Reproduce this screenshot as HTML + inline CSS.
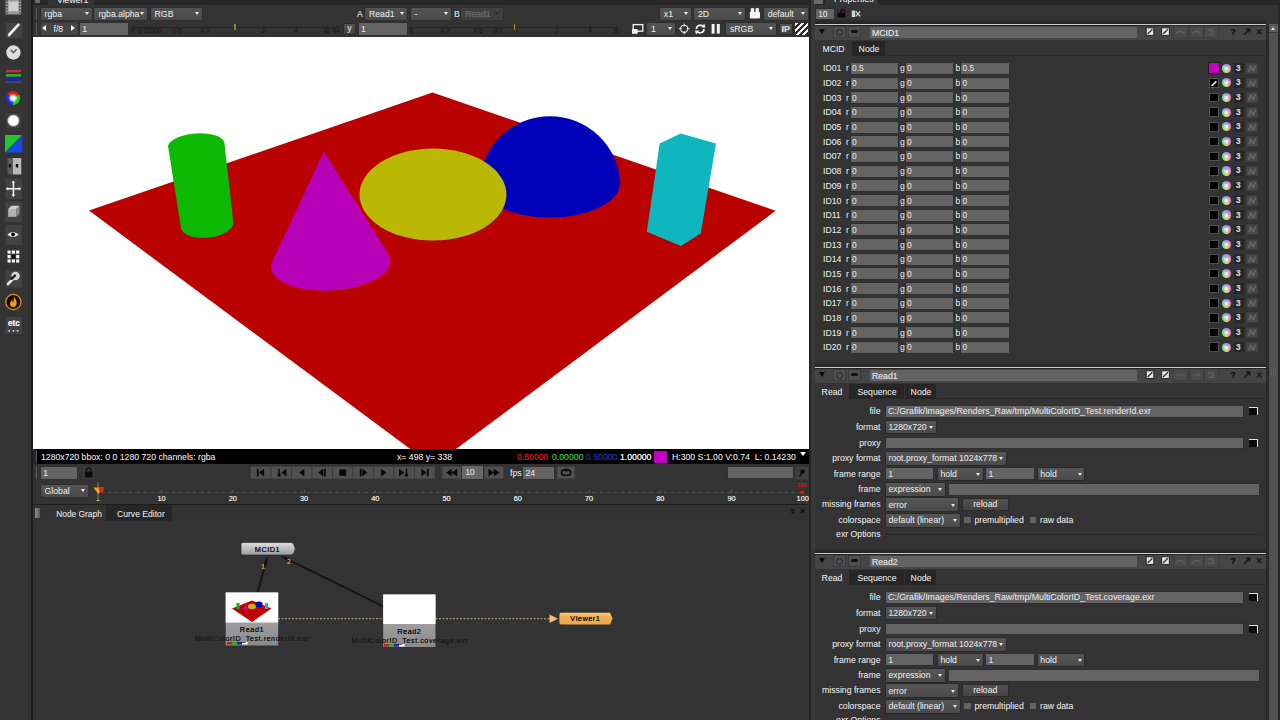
<!DOCTYPE html><html><head><meta charset="utf-8"><title>Nuke</title><style>
*{box-sizing:border-box;margin:0;padding:0}
html,body{width:1280px;height:720px;overflow:hidden;background:#333333}
body{position:relative;font-family:"Liberation Sans",sans-serif;font-size:8.7px;color:#dedede;line-height:1}
.a{position:absolute}
.t{position:absolute;white-space:nowrap;line-height:12px;height:12px;text-shadow:0 0 0.5px rgba(222,222,222,0.55)}
.f{position:absolute;background:#636363;box-shadow:0 0 0 0.7px #2e2e2e}
.dd{position:absolute;background:linear-gradient(#565656,#4a4a4a);box-shadow:0 0 0 0.8px #272727;border-radius:1px}
.dd:after{content:"";position:absolute;right:2.6px;top:50%;margin-top:-1px;border-left:2.5px solid transparent;border-right:2.5px solid transparent;border-top:3px solid #e8e8e8}
.dd2{position:absolute;background:linear-gradient(#545454,#4a4a4a);border-radius:1.5px;box-shadow:0 0 0 0.6px #2a2a2a}
.dd2:after{content:"";position:absolute;right:3px;top:50%;margin-top:-1.5px;border-left:2.5px solid transparent;border-right:2.5px solid transparent;border-top:3px solid #f0f0f0}
.btn{position:absolute;background:linear-gradient(#525252,#434343);border:1px solid #2b2b2b}
.r{text-align:right}
</style></head><body>
<div class="a" style="left:0px;top:0px;width:31.2px;height:720px;background:#333333;"></div>
<div class="a" style="left:31.2px;top:0px;width:1.9px;height:720px;background:#1c1c1c;"></div>
<svg class="a" style="left:0;top:0" width="30" height="340" viewBox="0 0 30 340">
<defs>
<radialGradient id="glow"><stop offset="0" stop-color="#fff"/><stop offset="0.7" stop-color="#fff"/><stop offset="1" stop-color="#fff" stop-opacity="0"/></radialGradient>
<radialGradient id="cw"><stop offset="0" stop-color="#fff"/><stop offset="0.35" stop-color="#fff" stop-opacity="0.9"/><stop offset="0.8" stop-color="#fff" stop-opacity="0"/></radialGradient>
</defs>
<!-- film -->
<rect x="5.6" y="-2" width="15.6" height="16.5" fill="#9a9a9a"/>
<rect x="8.6" y="1.5" width="9.6" height="9.6" fill="#cfcfcf"/>
<g fill="#4a4a4a"><rect x="6.3" y="0" width="1.5" height="1.6"/><rect x="6.3" y="3" width="1.5" height="1.6"/><rect x="6.3" y="6" width="1.5" height="1.6"/><rect x="6.3" y="9" width="1.5" height="1.6"/><rect x="6.3" y="12" width="1.5" height="1.6"/>
<rect x="19" y="0" width="1.5" height="1.6"/><rect x="19" y="3" width="1.5" height="1.6"/><rect x="19" y="6" width="1.5" height="1.6"/><rect x="19" y="9" width="1.5" height="1.6"/><rect x="19" y="12" width="1.5" height="1.6"/></g>
<!-- pencil -->
<rect x="5.6" y="23" width="17" height="15" fill="#434343"/>
<line x1="9" y1="35" x2="18.5" y2="24.6" stroke="#f0f0f0" stroke-width="2.6" stroke-linecap="round"/>
<!-- clock -->
<circle cx="13.4" cy="52.5" r="7.2" fill="#dcdcdc"/>
<path d="M10.8,49.8 L13.4,52.8 L16.6,49.2" stroke="#555" stroke-width="1.4" fill="none"/>
<!-- channel -->
<rect x="6" y="69.8" width="15" height="2.5" fill="#c03040"/>
<rect x="6" y="74.1" width="15" height="2.5" fill="#30b030"/>
<rect x="6" y="78.2" width="15" height="2.5" fill="#2020c8"/>
<rect x="6" y="81.5" width="15" height="1.5" fill="#505050"/>
<!-- color wheel -->
<path d="M13,98 L6.9,94.5 A7,7 0 0 1 19.1,94.5 Z" fill="#e01818"/>
<path d="M13,98 L19.1,94.5 A7,7 0 0 1 13,105 Z" fill="#18d018"/>
<path d="M13,98 L13,105 A7,7 0 0 1 6.9,94.5 Z" fill="#1830e0"/>
<circle cx="13" cy="98" r="6" fill="url(#cw)"/>
<!-- filter glow -->
<rect x="6" y="113" width="15" height="15" fill="#3e3e3e"/>
<circle cx="13.4" cy="120.6" r="6.6" fill="url(#glow)"/>
<!-- keyer -->
<polygon points="5,135 22.3,135 5,152.5" fill="#20c828"/>
<polygon points="22.3,135 22.3,152.5 5,152.5" fill="#1848e0"/>
<!-- merge -->
<rect x="7.5" y="158" width="5.5" height="16.4" fill="#5a5a5a"/>
<rect x="13" y="158" width="8.3" height="16.4" fill="#b8b8b8"/>
<rect x="8.8" y="164" width="2.2" height="3.4" fill="#0a0a0a"/><rect x="15.8" y="164" width="2.4" height="3.4" fill="#0a0a0a"/>
<!-- transform -->
<rect x="5.6" y="178.5" width="16.6" height="20.5" fill="#424242"/>
<path d="M13.4,181.5 V196 M6.4,188.8 H20.4" stroke="#f4f4f4" stroke-width="1.5"/>
<path d="M13.4,180.5 l-1.8,2.6 h3.6z M13.4,197 l-1.8,-2.6 h3.6z M5.6,188.8 l2.6,-1.8 v3.6z M21.2,188.8 l-2.6,-1.8 v3.6z" fill="#f4f4f4"/>
<!-- cube -->
<rect x="5.6" y="201.5" width="16.6" height="20.5" fill="#424242"/>
<polygon points="8.2,209 11.5,205.8 19.5,205.8 16.5,209" fill="#d0d0d0"/>
<rect x="8.2" y="209" width="8.3" height="7.8" fill="#b4b4b4"/>
<polygon points="16.5,209 19.5,205.8 19.5,213.6 16.5,216.8" fill="#8c8c8c"/>
<!-- eye -->
<rect x="5.6" y="225" width="16.6" height="20" fill="#424242"/>
<path d="M7.4,234.6 Q13,229.6 18.8,234.6 Q13,239.6 7.4,234.6Z" fill="#f4f4f4"/>
<circle cx="13" cy="234.5" r="1.9" fill="#0a0a0a"/>
<!-- grid -->
<g fill="#f4f4f4"><rect x="7.5" y="250.5" width="3.2" height="3.2"/><rect x="11.8" y="250.5" width="3.2" height="3.2"/><rect x="16.1" y="250.5" width="3.2" height="3.2"/>
<rect x="7.5" y="255" width="3.2" height="3.2"/><rect x="16.1" y="255" width="3.2" height="3.2"/>
<rect x="7.5" y="259.4" width="3.2" height="3.2"/><rect x="11.8" y="259.4" width="3.2" height="3.2"/><rect x="16.1" y="259.4" width="3.2" height="3.2"/></g>
<rect x="11.8" y="255" width="3.2" height="3.2" fill="#0a0a0a"/>
<!-- wrench -->
<rect x="5.6" y="270.5" width="16.6" height="17" fill="#424242"/>
<path d="M8,284 L12.5,279.5" stroke="#e8e8e8" stroke-width="2.6" stroke-linecap="round"/>
<circle cx="15.5" cy="276" r="4.2" fill="#d8d8d8"/>
<path d="M11.5,279 L15,275.5" stroke="#1a1a1a" stroke-width="2.4" stroke-linecap="round"/>
<!-- furnace -->
<circle cx="13.4" cy="302" r="7.6" fill="#140800" stroke="#e0941c" stroke-width="1.3"/>
<path d="M14.2,296.2 C14.8,299 17.4,300.4 16.6,304 C16.2,306 14.8,307.2 13.2,307.2 C11.2,307.2 9.8,305.8 10,303.6 C10.2,301.8 11.6,301.2 11.8,299.4 C12.8,300.4 12.6,301.8 13.2,302.4 C14,300.6 13.4,298.2 14.2,296.2Z" fill="#f09a20"/>
<!-- etc -->
<rect x="5.6" y="317" width="16.6" height="17" fill="#424242"/>
<g fill="#d8d8d8"><rect x="8.4" y="330" width="1.6" height="1.6"/><rect x="12.6" y="330" width="1.6" height="1.6"/><rect x="16.8" y="330" width="1.6" height="1.6"/></g>
</svg>
<div class="t" style="left:5.6px;top:318px;font-size:8.2px;color:#f0f0f0;text-shadow:0 0 0.4px #f0f0f0;width:16.6px;text-align:center;font-weight:bold">etc</div>
<div class="a" style="left:33px;top:0px;width:776.2px;height:5px;background:#272727;"></div>
<div class="a" style="left:48px;top:0px;width:46px;height:5px;background:#333333;"></div>
<div class="a" style="left:35px;top:0px;width:5px;height:3px;background:#6a6a6a;"></div>
<div class="a" style="left:48px;top:0;width:46px;height:4px;overflow:hidden"><div class="t" style="left:9px;top:-6.5px;font-size:8.7px;color:#e0e0e0">Viewer1</div></div>
<div class="a" style="left:33px;top:5px;width:776.2px;height:33px;background:#333333;"></div>
<div class="a" style="left:809.2px;top:0px;width:1.8px;height:720px;background:#242424;"></div>
<div class="a" style="left:811px;top:0px;width:4px;height:720px;background:#383838;"></div>
<div class="a" style="left:36px;top:8px;width:1px;height:12px;background:#5a5a5a;"></div>
<div class="a" style="left:36px;top:23px;width:1px;height:12px;background:#5a5a5a;"></div>
<div class="dd2" style="left:40.6px;top:8px;width:51.4px;height:11.5px"></div>
<div class="t" style="left:44.6px;top:7.7px;font-size:8.7px;">rgba</div>
<div class="dd2" style="left:94.4px;top:8px;width:53.1px;height:11.5px"></div>
<div class="t" style="left:98.4px;top:7.7px;font-size:8.7px;">rgba.alpha</div>
<div class="dd2" style="left:150.6px;top:8px;width:51.4px;height:11.5px"></div>
<div class="t" style="left:154.6px;top:7.7px;font-size:8.7px;">RGB</div>
<div class="t" style="left:357px;top:7.7px;font-size:8.7px;">A</div>
<div class="dd2" style="left:365px;top:8px;width:42px;height:11.5px"></div>
<div class="t" style="left:369px;top:7.7px;font-size:8.7px;">Read1</div>
<div class="dd2" style="left:410.5px;top:8px;width:40px;height:11.5px"></div>
<div class="t" style="left:414.5px;top:7.7px;font-size:8.7px;">-</div>
<div class="t" style="left:454px;top:7.7px;font-size:8.7px;">B</div>
<div class="a" style="left:461px;top:8px;width:42px;height:11.5px;background:#404040;border-radius:1.5px;box-shadow:0 0 0 0.6px #2c2c2c"></div>
<div class="t" style="left:465px;top:7.7px;font-size:8.7px;color:#6a6a6a;text-shadow:0 0 0.4px #6a6a6a;">Read1</div>
<div class="a" style="left:495px;top:12.2px;border-left:2.5px solid transparent;border-right:2.5px solid transparent;border-top:3px solid #2a2a2a"></div>
<div class="dd2" style="left:659.8px;top:8px;width:31.2px;height:11.5px"></div>
<div class="t" style="left:663.8px;top:7.7px;font-size:8.7px;">x1</div>
<div class="dd2" style="left:694px;top:8px;width:51px;height:11.5px"></div>
<div class="t" style="left:698px;top:7.7px;font-size:8.7px;">2D</div>
<div class="dd2" style="left:763.7px;top:8px;width:44.3px;height:11.5px"></div>
<div class="t" style="left:767.7px;top:7.7px;font-size:8.7px;">default</div>
<svg class="a" style="left:749px;top:7px" width="12" height="13" viewBox="0 0 12 13"><rect x="0.8" y="4.8" width="10.2" height="6.6" rx="1" fill="#f4f4f4"/><rect x="1.8" y="1.2" width="3.3" height="4.5" fill="#f4f4f4"/><rect x="6.6" y="1.2" width="3.3" height="4.5" fill="#f4f4f4"/></svg>
<div class="a" style="left:40.6px;top:23px;width:37.4px;height:11.5px;background:#454545;border-radius:1px"></div>
<div class="a" style="left:42px;top:25.3px;border-top:3.6px solid transparent;border-bottom:3.6px solid transparent;border-right:4.2px solid #f2f2f2"></div>
<div class="t" style="left:53.5px;top:22.7px;font-size:8.7px;">f/8</div>
<div class="a" style="left:71.3px;top:25.3px;border-top:3.6px solid transparent;border-bottom:3.6px solid transparent;border-left:4.2px solid #f2f2f2"></div>
<div class="f" style="left:80px;top:23px;width:47.7px;height:11.5px;"></div>
<div class="t" style="left:82.2px;top:22.75px;font-size:8.7px;">1</div>
<div class="a" style="left:131px;top:26.5px;width:208px;height:1px;background:#242424;"></div>
<div class="a" style="left:133px;top:24.5px;width:1px;height:3px;background:#242424;"></div>
<div class="t" style="left:125px;top:27.2px;font-size:6.5px;color:#1e1e1e;text-shadow:0 0 0.4px #1e1e1e;width:16px;text-align:center;line-height:8px;height:8px">0</div>
<div class="a" style="left:146px;top:24.5px;width:1px;height:3px;background:#242424;"></div>
<div class="t" style="left:138px;top:27.2px;font-size:6.5px;color:#1e1e1e;text-shadow:0 0 0.4px #1e1e1e;width:16px;text-align:center;line-height:8px;height:8px">0.12500</div>
<div class="a" style="left:177px;top:24.5px;width:1px;height:3px;background:#242424;"></div>
<div class="t" style="left:169px;top:27.2px;font-size:6.5px;color:#1e1e1e;text-shadow:0 0 0.4px #1e1e1e;width:16px;text-align:center;line-height:8px;height:8px">0.5</div>
<div class="a" style="left:205px;top:24.5px;width:1px;height:3px;background:#242424;"></div>
<div class="t" style="left:197px;top:27.2px;font-size:6.5px;color:#1e1e1e;text-shadow:0 0 0.4px #1e1e1e;width:16px;text-align:center;line-height:8px;height:8px">0.7</div>
<div class="a" style="left:263px;top:24.5px;width:1px;height:3px;background:#242424;"></div>
<div class="t" style="left:255px;top:27.2px;font-size:6.5px;color:#1e1e1e;text-shadow:0 0 0.4px #1e1e1e;width:16px;text-align:center;line-height:8px;height:8px">2</div>
<div class="a" style="left:296px;top:24.5px;width:1px;height:3px;background:#242424;"></div>
<div class="t" style="left:288px;top:27.2px;font-size:6.5px;color:#1e1e1e;text-shadow:0 0 0.4px #1e1e1e;width:16px;text-align:center;line-height:8px;height:8px">4</div>
<div class="a" style="left:327px;top:24.5px;width:1px;height:3px;background:#242424;"></div>
<div class="t" style="left:319px;top:27.2px;font-size:6.5px;color:#1e1e1e;text-shadow:0 0 0.4px #1e1e1e;width:16px;text-align:center;line-height:8px;height:8px">32</div>
<div class="a" style="left:336px;top:24.5px;width:1px;height:3px;background:#242424;"></div>
<div class="t" style="left:328px;top:27.2px;font-size:6.5px;color:#1e1e1e;text-shadow:0 0 0.4px #1e1e1e;width:16px;text-align:center;line-height:8px;height:8px">64</div>
<div class="a" style="left:234px;top:24.2px;width:1.6px;height:6.2px;background:#8a8630;"></div>
<div class="btn" style="left:343px;top:23px;width:13px;height:11.5px;border-radius:1px"></div>
<div class="t" style="left:343px;top:21.8px;font-size:8.7px;width:13px;text-align:center">y</div>
<div class="f" style="left:358.7px;top:23px;width:48.3px;height:11.5px;"></div>
<div class="t" style="left:360.9px;top:22.75px;font-size:8.7px;">1</div>
<div class="a" style="left:410px;top:26.5px;width:207.5px;height:1px;background:#242424;"></div>
<div class="a" style="left:411px;top:24.5px;width:1px;height:3px;background:#242424;"></div>
<div class="t" style="left:403px;top:27.2px;font-size:6.5px;color:#1e1e1e;text-shadow:0 0 0.4px #1e1e1e;width:16px;text-align:center;line-height:8px;height:8px">0</div>
<div class="a" style="left:445px;top:24.5px;width:1px;height:3px;background:#242424;"></div>
<div class="t" style="left:437px;top:27.2px;font-size:6.5px;color:#1e1e1e;text-shadow:0 0 0.4px #1e1e1e;width:16px;text-align:center;line-height:8px;height:8px">0.2</div>
<div class="a" style="left:478px;top:24.5px;width:1px;height:3px;background:#242424;"></div>
<div class="t" style="left:470px;top:27.2px;font-size:6.5px;color:#1e1e1e;text-shadow:0 0 0.4px #1e1e1e;width:16px;text-align:center;line-height:8px;height:8px">0.5</div>
<div class="a" style="left:498px;top:24.5px;width:1px;height:3px;background:#242424;"></div>
<div class="t" style="left:490px;top:27.2px;font-size:6.5px;color:#1e1e1e;text-shadow:0 0 0.4px #1e1e1e;width:16px;text-align:center;line-height:8px;height:8px">0.7</div>
<div class="a" style="left:557px;top:24.5px;width:1px;height:3px;background:#242424;"></div>
<div class="t" style="left:549px;top:27.2px;font-size:6.5px;color:#1e1e1e;text-shadow:0 0 0.4px #1e1e1e;width:16px;text-align:center;line-height:8px;height:8px">2</div>
<div class="a" style="left:590px;top:24.5px;width:1px;height:3px;background:#242424;"></div>
<div class="t" style="left:582px;top:27.2px;font-size:6.5px;color:#1e1e1e;text-shadow:0 0 0.4px #1e1e1e;width:16px;text-align:center;line-height:8px;height:8px">4</div>
<div class="a" style="left:616px;top:24.5px;width:1px;height:3px;background:#242424;"></div>
<div class="t" style="left:608px;top:27.2px;font-size:6.5px;color:#1e1e1e;text-shadow:0 0 0.4px #1e1e1e;width:16px;text-align:center;line-height:8px;height:8px">5</div>
<div class="a" style="left:513.6px;top:24.2px;width:1.6px;height:6.2px;background:#b8861c;"></div>
<svg class="a" style="left:631px;top:23px" width="14" height="12" viewBox="0 0 14 12"><rect x="2.2" y="1.6" width="9.6" height="6.6" fill="none" stroke="#f4f4f4" stroke-width="1.3"/><rect x="1" y="6" width="5.6" height="4.8" fill="#f4f4f4"/></svg>
<div class="dd2" style="left:647px;top:23px;width:27.7px;height:11.5px"></div>
<div class="t" style="left:651px;top:22.7px;font-size:8.7px;">1</div>
<svg class="a" style="left:677px;top:22px" width="46" height="14" viewBox="677 22 46 14"><circle cx="684.2" cy="28.8" r="3.6" fill="none" stroke="#e8e8e8" stroke-width="1.1"/><path d="M684.2,23.4v3 M684.2,31.2v3 M678.8,28.8h3 M686.6,28.8h3" stroke="#e8e8e8" stroke-width="1.1"/><path d="M696.4,29 a3.8,3.8 0 0 1 6.6,-2.6" fill="none" stroke="#f4f4f4" stroke-width="1.7"/><path d="M704,29 a3.8,3.8 0 0 1 -6.6,2.6" fill="none" stroke="#f4f4f4" stroke-width="1.7"/><polygon points="701.4,27.4 705.4,27.6 704.4,23.6" fill="#f4f4f4"/><polygon points="699,30.6 695,30.4 696,34.4" fill="#f4f4f4"/><rect x="711.6" y="24" width="3" height="9.6" fill="#f4f4f4"/><rect x="716.8" y="24" width="3" height="9.6" fill="#f4f4f4"/></svg>
<div class="dd2" style="left:726px;top:23px;width:50px;height:11.5px"></div>
<div class="t" style="left:730px;top:22.7px;font-size:8.7px;">sRGB</div>
<div class="btn" style="left:779px;top:23px;width:13.5px;height:11.5px;border-radius:1px"></div>
<div class="t" style="left:779px;top:22.7px;font-size:9.2px;width:13.5px;text-align:center;font-weight:bold">IP</div>
<div class="a" style="left:795px;top:23px;width:12.5px;height:11.5px;background:repeating-linear-gradient(135deg,#f4f4f4 0,#f4f4f4 2.2px,#2a2a2a 2.2px,#2a2a2a 4.4px)"></div>
<svg class="a" style="left:33px;top:37.4px" width="776.2" height="411.3" viewBox="33 37.4 776.2 411.3">
<rect x="33" y="37" width="777" height="413" fill="#ffffff"/>
<polygon points="432.5,93 775.6,211.2 433.2,466.4 89,211" fill="#b90200"/>
<path d="M479.5,183 A70.5,70 0 0 1 620.3,183 A70.4,35 0 0 1 479.5,183 Z" fill="#0000b9"/>
<ellipse cx="433" cy="195" rx="73.5" ry="46" fill="#bab705"/>
<polygon points="323.8,152 272.3,261.7 388.5,254.6" fill="#b900b9"/><ellipse cx="330.8" cy="264.3" rx="59.8" ry="26.6" transform="rotate(-3.5 330.8 264.3)" fill="#b900b9"/>
<path d="M168,146.5 A28.5,12.5 -4 0 1 224.3,142.5 L233.3,222.5 A26.3,12.5 -6 0 1 181,228.5 Z" fill="#0db905"/>
<polygon points="680.7,134 716,144 700.8,233.6 681,246.5 646.8,232.2 659.7,144" fill="#0eb6bd"/>
</svg>
<div class="a" style="left:33px;top:448.7px;width:776.2px;height:15.2px;background:#000000;"></div>
<div class="a" style="left:33px;top:448.7px;width:4.2px;height:15.2px;background:#262626;"></div>
<div class="a" style="left:35.6px;top:451px;width:1px;height:11px;background:#5a5a5a;"></div>
<div class="t" style="left:41px;top:451px;font-size:8.7px;">1280x720 bbox: 0 0 1280 720 channels: rgba</div>
<div class="t" style="left:397px;top:451px;font-size:8.7px;">x= 498 y= 338</div>
<div class="t" style="left:517px;top:451px;font-size:8.7px;color:#c01818;text-shadow:0 0 0.4px #c01818;">0.50000</div>
<div class="t" style="left:552px;top:451px;font-size:8.7px;color:#28b028;text-shadow:0 0 0.4px #28b028;">0.00000</div>
<div class="t" style="left:586px;top:451px;font-size:8.7px;color:#2828a0;text-shadow:0 0 0.4px #2828a0;">0.50000</div>
<div class="t" style="left:620px;top:451px;font-size:8.7px;color:#f0f0f0;text-shadow:0 0 0.4px #f0f0f0;">1.00000</div>
<div class="a" style="left:654px;top:451px;width:13px;height:12px;background:#c000c0;"></div>
<div class="t" style="left:672px;top:451px;font-size:8.7px;">H:300 S:1.00 V:0.74&nbsp; L: 0.14230</div>
<div class="a" style="left:800px;top:452.4px;border-left:3.5px solid transparent;border-right:3.5px solid transparent;border-top:4px solid #fff"></div>
<div class="a" style="left:33px;top:464px;width:776.2px;height:18px;background:#333333;"></div>
<div class="a" style="left:36px;top:467px;width:1px;height:12px;background:#5a5a5a;"></div>
<div class="a" style="left:36px;top:485px;width:1px;height:12px;background:#5a5a5a;"></div>
<div class="f" style="left:41px;top:467px;width:35.5px;height:11.5px;"></div>
<div class="t" style="left:43.2px;top:466.75px;font-size:8.7px;">1</div>
<svg class="a" style="left:82px;top:466px" width="13" height="14" viewBox="0 0 13 14"><rect x="0.5" y="0.5" width="12" height="13" fill="#3a3a3a"/><rect x="3" y="5.6" width="7.4" height="6" fill="#0c0c0c"/><path d="M4.4,5.8 V4.2 a2.3,2.3 0 0 1 4.6,0 V5.8" fill="none" stroke="#0c0c0c" stroke-width="1.3"/></svg>
<svg class="a" style="left:250px;top:466px" width="330" height="14" viewBox="250 466 330 14"><rect x="250.50" y="466.3" width="20.50" height="12.6" fill="#505050" stroke="#3a3a3a" stroke-width="0.8"/><rect x="271.00" y="466.3" width="20.50" height="12.6" fill="#505050" stroke="#3a3a3a" stroke-width="0.8"/><rect x="291.50" y="466.3" width="20.50" height="12.6" fill="#505050" stroke="#3a3a3a" stroke-width="0.8"/><rect x="312.00" y="466.3" width="20.50" height="12.6" fill="#505050" stroke="#3a3a3a" stroke-width="0.8"/><rect x="332.50" y="466.3" width="20.50" height="12.6" fill="#505050" stroke="#3a3a3a" stroke-width="0.8"/><rect x="353.00" y="466.3" width="20.50" height="12.6" fill="#505050" stroke="#3a3a3a" stroke-width="0.8"/><rect x="373.50" y="466.3" width="20.50" height="12.6" fill="#505050" stroke="#3a3a3a" stroke-width="0.8"/><rect x="394.00" y="466.3" width="20.50" height="12.6" fill="#505050" stroke="#3a3a3a" stroke-width="0.8"/><rect x="414.50" y="466.3" width="20.50" height="12.6" fill="#505050" stroke="#3a3a3a" stroke-width="0.8"/><g fill="#080808"><rect x="256.85" y="468.80" width="1.8" height="7.6"/><polygon points="264.15,468.80 264.15,476.40 258.95,472.60"/><circle cx="279.05" cy="475.00" r="1.8"/><rect x="278.35" y="468.80" width="1.4" height="5"/><polygon points="286.45,468.80 286.45,476.40 281.25,472.60"/><polygon points="304.35,468.80 304.35,476.40 299.15,472.60"/><polygon points="323.25,468.80 323.25,476.40 318.05,472.60"/><rect x="323.95" y="468.80" width="1.8" height="7.6"/><rect x="339.35" y="469.40" width="6.8" height="6.4"/><rect x="359.75" y="468.80" width="1.8" height="7.6"/><polygon points="362.25,468.80 362.25,476.40 367.45,472.60"/><polygon points="381.15,468.80 381.15,476.40 386.35,472.60"/><polygon points="399.05,468.80 399.05,476.40 404.25,472.60"/><circle cx="406.45" cy="475.00" r="1.8"/><rect x="405.75" y="468.80" width="1.4" height="5"/><polygon points="421.35,468.80 421.35,476.40 426.55,472.60"/><rect x="426.85" y="468.80" width="1.8" height="7.6"/></g><rect x="442.00" y="466.3" width="19.60" height="12.6" fill="#505050" stroke="#3a3a3a" stroke-width="0.8"/><rect x="484.00" y="466.3" width="19.80" height="12.6" fill="#505050" stroke="#3a3a3a" stroke-width="0.8"/><rect x="557.00" y="466.3" width="18.00" height="12.6" fill="#505050" stroke="#3a3a3a" stroke-width="0.8"/><g fill="#080808"><polygon points="451.80,468.80 451.80,476.40 446.20,472.60"/><polygon points="457.20,468.80 457.20,476.40 451.60,472.60"/><polygon points="488.40,468.80 488.40,476.40 494.00,472.60"/><polygon points="493.80,468.80 493.80,476.40 499.40,472.60"/></g><rect x="561.6" y="470" width="9" height="5.2" rx="2.4" fill="none" stroke="#080808" stroke-width="1.5"/><polygon points="565.4,467.8 568.6,470 565.4,472.2" fill="#080808"/></svg>
<div class="f" style="left:462.3px;top:466.3px;width:20.6px;height:12.6px;background:#686868"></div>
<div class="t" style="left:465.5px;top:466.5px;font-size:8.2px;">10</div>
<div class="t" style="left:510px;top:466.6px;font-size:8.7px;">fps</div>
<div class="f" style="left:523.3px;top:466.6px;width:30.5px;height:12px;"></div>
<div class="t" style="left:525.5px;top:466.6px;font-size:8.7px;">24</div>
<div class="f" style="left:728px;top:467px;width:65px;height:11px;"></div>
<svg class="a" style="left:795px;top:466px" width="14" height="14" viewBox="0 0 14 14"><rect x="0.5" y="0.5" width="13" height="13" fill="#404040"/><circle cx="7.6" cy="5.4" r="2.2" fill="#0c0c0c"/><path d="M6.6,6.6 L4.6,10.6" stroke="#0c0c0c" stroke-width="1.5"/></svg>
<div class="a" style="left:33px;top:482px;width:776.2px;height:22px;background:#333333;"></div>
<div class="dd2" style="left:40.6px;top:485.4px;width:47.4px;height:11.2px"></div>
<div class="t" style="left:44.6px;top:485.09999999999997px;font-size:8.7px;">Global</div>
<div class="a" style="left:108px;top:492px;width:696px;height:1px;background:#555;background:repeating-linear-gradient(90deg,#4e4e4e 0,#4e4e4e 3px,transparent 3px,transparent 7.125px)"></div>
<div class="a" style="left:161.025px;top:489.5px;width:1px;height:3px;background:#555;"></div>
<div class="t" style="left:151.525px;top:494.3px;font-size:7.4px;color:#e4e4e4;text-shadow:0 0 0.4px #e4e4e4;width:20px;text-align:center;line-height:9px;height:9px">10</div>
<div class="a" style="left:232.275px;top:489.5px;width:1px;height:3px;background:#555;"></div>
<div class="t" style="left:222.775px;top:494.3px;font-size:7.4px;color:#e4e4e4;text-shadow:0 0 0.4px #e4e4e4;width:20px;text-align:center;line-height:9px;height:9px">20</div>
<div class="a" style="left:303.525px;top:489.5px;width:1px;height:3px;background:#555;"></div>
<div class="t" style="left:294.025px;top:494.3px;font-size:7.4px;color:#e4e4e4;text-shadow:0 0 0.4px #e4e4e4;width:20px;text-align:center;line-height:9px;height:9px">30</div>
<div class="a" style="left:374.775px;top:489.5px;width:1px;height:3px;background:#555;"></div>
<div class="t" style="left:365.275px;top:494.3px;font-size:7.4px;color:#e4e4e4;text-shadow:0 0 0.4px #e4e4e4;width:20px;text-align:center;line-height:9px;height:9px">40</div>
<div class="a" style="left:446.025px;top:489.5px;width:1px;height:3px;background:#555;"></div>
<div class="t" style="left:436.525px;top:494.3px;font-size:7.4px;color:#e4e4e4;text-shadow:0 0 0.4px #e4e4e4;width:20px;text-align:center;line-height:9px;height:9px">50</div>
<div class="a" style="left:517.275px;top:489.5px;width:1px;height:3px;background:#555;"></div>
<div class="t" style="left:507.775px;top:494.3px;font-size:7.4px;color:#e4e4e4;text-shadow:0 0 0.4px #e4e4e4;width:20px;text-align:center;line-height:9px;height:9px">60</div>
<div class="a" style="left:588.525px;top:489.5px;width:1px;height:3px;background:#555;"></div>
<div class="t" style="left:579.025px;top:494.3px;font-size:7.4px;color:#e4e4e4;text-shadow:0 0 0.4px #e4e4e4;width:20px;text-align:center;line-height:9px;height:9px">70</div>
<div class="a" style="left:659.775px;top:489.5px;width:1px;height:3px;background:#555;"></div>
<div class="t" style="left:650.275px;top:494.3px;font-size:7.4px;color:#e4e4e4;text-shadow:0 0 0.4px #e4e4e4;width:20px;text-align:center;line-height:9px;height:9px">80</div>
<div class="a" style="left:731.025px;top:489.5px;width:1px;height:3px;background:#555;"></div>
<div class="t" style="left:721.525px;top:494.3px;font-size:7.4px;color:#e4e4e4;text-shadow:0 0 0.4px #e4e4e4;width:20px;text-align:center;line-height:9px;height:9px">90</div>
<div class="a" style="left:802.275px;top:489.5px;width:1px;height:3px;background:#555;"></div>
<div class="t" style="left:792.775px;top:494.3px;font-size:7.4px;color:#e4e4e4;text-shadow:0 0 0.4px #e4e4e4;width:20px;text-align:center;line-height:9px;height:9px">100</div>
<svg class="a" style="left:90px;top:482px" width="16" height="22" viewBox="90 482 16 22"><rect x="97.5" y="482.5" width="1" height="18.5" fill="#a87c38"/><polygon points="93.4,487.4 103.4,487.4 98.3,494" fill="#f0a020"/><polygon points="98.4,487.4 103.6,487.4 103.4,493.6 99.4,491" fill="#e02818"/><rect x="96.6" y="500" width="3" height="1" fill="#bbb"/></svg>
<svg class="a" style="left:794px;top:482px" width="16" height="14" viewBox="794 482 16 14"><polygon points="799.2,493.4 804.2,493.4 803.2,489.4" fill="#e01818"/></svg>
<div class="t" style="left:797px;top:482.3px;font-size:5.5px;color:#d01818;text-shadow:0 0 0.4px #d01818;line-height:7px;height:7px">100</div>
<div class="a" style="left:33px;top:504px;width:776.2px;height:1px;background:#1c1c1c;"></div>
<div class="a" style="left:33px;top:505px;width:776.2px;height:16px;background:#323232;"></div>
<div class="a" style="left:34.5px;top:507.5px;width:5.5px;height:10px;background:#777;background:linear-gradient(90deg,#8c8c8c,#555)"></div>
<div class="a" style="left:48.7px;top:505px;width:57.6px;height:16px;background:#333333;"></div>
<div class="a" style="left:106.3px;top:505px;width:65.7px;height:15.5px;background:#262626;"></div>
<div class="t" style="left:56.2px;top:507.5px;font-size:8.4px;">Node Graph</div>
<div class="t" style="left:117px;top:507.5px;font-size:8.6px;">Curve Editor</div>
<div class="t" style="left:789px;top:505.5px;font-size:8px;color:#141414;text-shadow:0 0 0.4px #141414;">&#8623;</div>
<div class="t" style="left:800px;top:505px;font-size:9.5px;color:#141414;text-shadow:0 0 0.4px #141414;font-weight:bold">&#215;</div>
<div class="a" style="left:33px;top:521px;width:776.2px;height:199px;background:#333333;"></div>
<svg class="a" style="left:33px;top:521px" width="777" height="199" viewBox="33 521 777 199">
<defs>
<linearGradient id="g1" x1="0" y1="0" x2="0" y2="1"><stop offset="0" stop-color="#e0e0e0"/><stop offset="1" stop-color="#9a9a9a"/></linearGradient>
<linearGradient id="g2" x1="0" y1="0" x2="0" y2="1"><stop offset="0" stop-color="#b8b8b8"/><stop offset="1" stop-color="#8a8a8a"/></linearGradient>
<linearGradient id="g3" x1="0" y1="0" x2="0" y2="1"><stop offset="0" stop-color="#ffd080"/><stop offset="0.3" stop-color="#f2b050"/><stop offset="1" stop-color="#eaa848"/></linearGradient>
</defs>
<line x1="278" y1="618.7" x2="550" y2="618.7" stroke="#a89878" stroke-width="1.2" stroke-dasharray="2,1.5"/>
<line x1="257.5" y1="593" x2="266.6" y2="559" stroke="#101010" stroke-width="1.7"/>
<line x1="383.4" y1="606.4" x2="284" y2="557.4" stroke="#101010" stroke-width="1.7"/>
<polygon points="267.6,555.4 263.2,564.5 266.8,565.2" fill="#101010"/>
<polygon points="280.2,555.4 290.6,559.2 288.8,562.2" fill="#101010"/>
<path d="M243,542.5 H291 Q293,542.5 294,545 L295.3,548.7 L294,552.5 Q293,555 291,555 H243 Q241,555 241,553 V544.5 Q241,542.5 243,542.5Z" fill="url(#g1)" stroke="#222" stroke-width="0.6"/>
<rect x="225.7" y="592.5" width="52.5" height="53" fill="url(#g2)"/>
<rect x="225.7" y="592.5" width="52.5" height="30" fill="#fff"/>
<polygon points="252,600.5 271.5,608.5 252,622 232,608.5" fill="#c00000"/>
<ellipse cx="259" cy="604.5" rx="3.6" ry="3" fill="#0000b8"/>
<ellipse cx="252" cy="606.5" rx="4" ry="2.8" fill="#c0b80a"/>
<polygon points="246,604 243,610 249,610" fill="#be00be"/>
<rect x="236.5" y="603" width="3" height="6" fill="#0db80d"/>
<rect x="265" y="603" width="3" height="6" fill="#12b8c0"/>
<rect x="227" y="642" width="5" height="2.5" fill="#c02020"/><rect x="232" y="642" width="5" height="2.5" fill="#20b020"/><rect x="237" y="642" width="5" height="2.5" fill="#2020c0"/><rect x="242" y="642" width="5.5" height="2.5" fill="#fff"/>
<rect x="383.2" y="594.5" width="52.3" height="52.5" fill="url(#g2)"/>
<rect x="383.2" y="594.5" width="52.3" height="29.5" fill="#fff"/>
<rect x="384" y="644" width="5" height="2.5" fill="#c02020"/><rect x="389" y="644" width="5" height="2.5" fill="#20b020"/><rect x="394" y="644" width="5" height="2.5" fill="#2020c0"/><rect x="399" y="644" width="5.5" height="2.5" fill="#fff"/>
<polygon points="549.5,614.5 558,618.7 549.5,623" fill="#f0c078"/>
<path d="M561,612.8 H610 L612.6,618.6 L610,624.4 H561 Q559.4,624.4 559.4,622.8 V614.4 Q559.4,612.8 561,612.8Z" fill="url(#g3)"/>
</svg>
<div class="t" style="left:241px;top:544.6px;font-size:7.3px;color:#141414;text-shadow:0 0 0.4px #141414;letter-spacing:0.55px;text-shadow:0 0 0.3px #141414;line-height:10px;height:10px;text-align:center;width:53px">MCID1</div>
<div class="t" style="left:225.6px;top:624.7px;font-size:7.3px;color:#141414;text-shadow:0 0 0.4px #141414;letter-spacing:0.55px;text-shadow:0 0 0.3px #141414;line-height:10px;height:10px;text-align:center;width:52.8px">Read1</div>
<div class="t" style="left:192px;top:633.5px;font-size:7.2px;color:#1a1a1a;text-shadow:0 0 0.4px #1a1a1a;width:120px;text-align:center;letter-spacing:0.55px;line-height:10px;height:10px">MultiColorID_Test.renderId.exr</div>
<div class="t" style="left:383.2px;top:626.7px;font-size:7.3px;color:#141414;text-shadow:0 0 0.4px #141414;letter-spacing:0.55px;text-shadow:0 0 0.3px #141414;line-height:10px;height:10px;text-align:center;width:52.3px">Read2</div>
<div class="t" style="left:349.5px;top:635.5px;font-size:7.2px;color:#1a1a1a;text-shadow:0 0 0.4px #1a1a1a;width:121px;text-align:center;letter-spacing:0.55px;line-height:10px;height:10px">MultiColorID_Test.coverage.exr</div>
<div class="t" style="left:559.4px;top:613.8px;font-size:7.3px;color:#201000;text-shadow:0 0 0.4px #201000;letter-spacing:0.55px;text-shadow:0 0 0.3px #141414;line-height:10px;height:10px;text-align:center;width:52px">Viewer1</div>
<div class="t" style="left:261.2px;top:563px;font-size:6.6px;color:#c8a468;text-shadow:0 0 0.4px #c8a468;line-height:8px;height:8px">1</div>
<div class="t" style="left:287px;top:558px;font-size:6.6px;color:#c8a468;text-shadow:0 0 0.4px #c8a468;line-height:8px;height:8px">2</div>
<div class="a" style="left:815px;top:0px;width:465px;height:5px;background:#272727;"></div>
<div class="a" style="left:825px;top:0px;width:53px;height:5px;background:#333333;"></div>
<div class="a" style="left:814px;top:0px;width:9px;height:3.5px;background:#6a6a6a;"></div>
<div class="a" style="left:825px;top:0;width:53px;height:4px;overflow:hidden"><div class="t" style="left:9px;top:-6.8px;font-size:8.7px;color:#e0e0e0">Properties</div></div>
<div class="a" style="left:815px;top:5px;width:465px;height:715px;background:#333333;"></div>
<div class="f" style="left:816px;top:9px;width:17.5px;height:10.5px;"></div>
<div class="t" style="left:818.2px;top:8.25px;font-size:8.4px;">10</div>
<svg class="a" style="left:836px;top:8px" width="28" height="12" viewBox="836 8 28 12"><rect x="837.6" y="12.6" width="7.6" height="5" fill="#0a0a0a"/><path d="M841,12.8 v-1.2 a1.9,1.9 0 0 1 3.8,0 v0.6" fill="none" stroke="#0a0a0a" stroke-width="1.2"/><rect x="851.8" y="10.6" width="3.4" height="6.4" fill="#d4d4d4"/><path d="M855.8,11.4 l4.4,5 M860.2,11.4 l-4.4,5" stroke="#d8d8d8" stroke-width="1.3"/></svg>
<div class="a" style="left:1265.8px;top:24px;width:3px;height:696px;background:#2a2a2a;"></div>
<div class="a" style="left:1268.7px;top:24px;width:9.4px;height:696px;background:#505050;"></div>
<div class="a" style="left:1268.7px;top:24px;width:9.4px;height:9px;background:#5c5c5c;border-bottom:1px solid #3c3c3c"></div>
<div class="a" style="left:1270.9px;top:26.5px;border-left:2.5px solid transparent;border-right:2.5px solid transparent;border-bottom:3.5px solid #e8e8e8"></div>
<div class="a" style="left:1271px;top:367px;width:1px;height:8px;background:#5e5e5e;"></div>
<div class="a" style="left:1273px;top:367px;width:1px;height:8px;background:#5e5e5e;"></div>
<div class="a" style="left:1275px;top:367px;width:1px;height:8px;background:#5e5e5e;"></div>
<div class="a" style="left:1278.1px;top:0px;width:2px;height:720px;background:#272727;"></div>
<div class="a" style="left:815px;top:19.4px;width:451px;height:4.4px;background:#2a2a2a;background:linear-gradient(#313131,#242424)"></div>
<div class="a" style="left:815px;top:23.5px;width:451px;height:1.6px;background:#cccccc;"></div>
<div class="a" style="left:815px;top:25.1px;width:451px;height:0.9px;background:#222;"></div>
<div class="a" style="left:815px;top:26px;width:451px;height:13.8px;background:#454545;"></div>
<div class="a" style="left:819px;top:29px;border-left:3.5px solid transparent;border-right:3.5px solid transparent;border-top:5px solid #0a0a0a"></div>
<div class="a" style="left:833px;top:26px;width:13px;height:12px;background:#4e4e4e;border:1px solid #3a3a3a"></div>
<div class="a" style="left:848px;top:26px;width:13px;height:12px;background:#4e4e4e;border:1px solid #3a3a3a"></div>
<div class="a" style="left:851px;top:30px;width:7px;height:3px;background:#111;border-radius:1.5px"></div>
<div class="a" style="left:836px;top:28.5px;width:7px;height:7px;border:1px solid #222;border-radius:50%"></div>
<div class="a" style="left:870px;top:27px;width:267px;height:11px;background:#636363;"></div>
<div class="t" style="left:872px;top:26.5px;font-size:8.7px;color:#d8d8d8;text-shadow:0 0 0.4px #d8d8d8;">MCID1</div>
<svg class="a" style="left:1140px;top:25px" width="126" height="14" viewBox="1140 0 126 14"><rect x="1146.2" y="2.8" width="7.6" height="7.6" fill="#e4e4e4" stroke="#1e1e1e" stroke-width="0.9"/><path d="M1147.6,9 L1152.4,4.2" stroke="#333" stroke-width="1.3"/><rect x="1161.7" y="2.8" width="7.6" height="7.6" fill="#e4e4e4" stroke="#1e1e1e" stroke-width="0.9"/><path d="M1163.1,9 L1167.9,4.2" stroke="#333" stroke-width="1.3"/><rect x="1173.5" y="1" width="14" height="12" fill="#4a4a4a" stroke="#3a3a3a" stroke-width="0.8"/><rect x="1189.5" y="1" width="14" height="12" fill="#4a4a4a" stroke="#3a3a3a" stroke-width="0.8"/><rect x="1204" y="1" width="14" height="12" fill="#4a4a4a" stroke="#3a3a3a" stroke-width="0.8"/><path d="M1176.6,8.4 q3.6,-4 8,0" fill="none" stroke="#606060" stroke-width="1.4"/><path d="M1192.6,8.4 q4.4,-4 8,0" fill="none" stroke="#606060" stroke-width="1.4"/><path d="M1208,5 h5 v4.4 h-4" fill="none" stroke="#606060" stroke-width="1.4"/><path d="M1244.2,9.8 L1249.2,4.6 M1246.4,4.2 h3.2 v3.2" fill="none" stroke="#141414" stroke-width="1.4"/><path d="M1257,4.4 l4.6,4.8 M1261.6,4.4 l-4.6,4.8" stroke="#141414" stroke-width="1.2"/></svg>
<div class="t" style="left:1230.5px;top:26.3px;font-size:8.6px;color:#111;text-shadow:0 0 0.4px #111;font-weight:bold">?</div>
<div class="a" style="left:815px;top:40.7px;width:451px;height:15px;background:#353535;"></div>
<div class="a" style="left:852px;top:55.1px;width:414px;height:1px;background:#2b2b2b;"></div>
<div class="t" style="left:815px;top:42.7px;font-size:8.7px;width:37px;text-align:center">MCID</div>
<div class="a" style="left:852px;top:40.7px;width:34px;height:15px;background:#262626;border-right:1px solid #333"></div>
<div class="t" style="left:852px;top:42.7px;font-size:8.7px;width:34px;text-align:center">Node</div>
<div class="t" style="left:823px;top:62.4px;font-size:8.7px;">ID01</div>
<div class="t" style="left:846px;top:62.4px;font-size:8.7px;">r</div>
<div class="f" style="left:850.5px;top:62.8px;width:47.5px;height:11px;"></div>
<div class="t" style="left:852px;top:62.4px;font-size:8.4px;">0.5</div>
<div class="t" style="left:900px;top:62.4px;font-size:8.7px;">g</div>
<div class="f" style="left:905.5px;top:62.8px;width:47.5px;height:11px;"></div>
<div class="t" style="left:907px;top:62.4px;font-size:8.4px;">0</div>
<div class="t" style="left:955.5px;top:62.4px;font-size:8.7px;">b</div>
<div class="f" style="left:961px;top:62.8px;width:47.5px;height:11px;"></div>
<div class="t" style="left:962.5px;top:62.4px;font-size:8.4px;">0.5</div>
<div class="a" style="left:1209px;top:63.4px;width:9.6px;height:9.6px;background:#c000c0;box-shadow:0 0 0 0.8px #1c1c1c"></div>
<div class="a" style="left:1221.8px;top:63.6px;width:9.2px;height:9.2px;border-radius:50%;background:conic-gradient(from 0deg,#9890e8,#e888c8,#f09090,#d8d878,#80e080,#78d8c8,#9890e8)"></div>
<div class="a" style="left:1223.9px;top:65.7px;width:5px;height:5px;border-radius:50%;background:radial-gradient(#fff,rgba(255,255,255,0))"></div>
<div class="a" style="left:1233.6px;top:63.199999999999996px;width:10.2px;height:10.2px;background:#272727;"></div>
<div class="t" style="left:1236px;top:62.699999999999996px;font-size:8.2px;color:#c8c8c8;text-shadow:0 0 0.4px #c8c8c8;font-weight:bold">3</div>
<div class="a" style="left:1245.5px;top:62.8px;width:12.2px;height:10.8px;background:#474747;border:1px solid #3c3c3c"></div>
<svg class="a" style="left:1245.5px;top:62.8px" width="12" height="11" viewBox="0 0 12 11"><path d="M2.6,8.6 L4.6,3.2 L7.4,7.8 L9.6,2.6" fill="none" stroke="#6c6c6c" stroke-width="1.3" stroke-linejoin="round"/></svg>
<div class="t" style="left:823px;top:77.07999999999998px;font-size:8.7px;">ID02</div>
<div class="t" style="left:846px;top:77.07999999999998px;font-size:8.7px;">r</div>
<div class="f" style="left:850.5px;top:77.5px;width:47.5px;height:11px;"></div>
<div class="t" style="left:852px;top:77.07999999999998px;font-size:8.4px;">0</div>
<div class="t" style="left:900px;top:77.07999999999998px;font-size:8.7px;">g</div>
<div class="f" style="left:905.5px;top:77.5px;width:47.5px;height:11px;"></div>
<div class="t" style="left:907px;top:77.07999999999998px;font-size:8.4px;">0</div>
<div class="t" style="left:955.5px;top:77.07999999999998px;font-size:8.7px;">b</div>
<div class="f" style="left:961px;top:77.5px;width:47.5px;height:11px;"></div>
<div class="t" style="left:962.5px;top:77.07999999999998px;font-size:8.4px;">0</div>
<div class="a" style="left:1209px;top:78.1px;width:9.6px;height:9.6px;background:#000;border:0.8px solid #505050"></div>
<div class="a" style="left:1221.8px;top:78.3px;width:9.2px;height:9.2px;border-radius:50%;background:conic-gradient(from 0deg,#9890e8,#e888c8,#f09090,#d8d878,#80e080,#78d8c8,#9890e8)"></div>
<div class="a" style="left:1223.9px;top:80.39999999999999px;width:5px;height:5px;border-radius:50%;background:radial-gradient(#fff,rgba(255,255,255,0))"></div>
<div class="a" style="left:1233.6px;top:77.89999999999999px;width:10.2px;height:10.2px;background:#272727;"></div>
<div class="t" style="left:1236px;top:77.38px;font-size:8.2px;color:#c8c8c8;text-shadow:0 0 0.4px #c8c8c8;font-weight:bold">3</div>
<div class="a" style="left:1245.5px;top:77.5px;width:12.2px;height:10.8px;background:#474747;border:1px solid #3c3c3c"></div>
<svg class="a" style="left:1245.5px;top:77.5px" width="12" height="11" viewBox="0 0 12 11"><path d="M2.6,8.6 L4.6,3.2 L7.4,7.8 L9.6,2.6" fill="none" stroke="#6c6c6c" stroke-width="1.3" stroke-linejoin="round"/></svg>
<svg class="a" style="left:1209px;top:78.1px" width="10" height="10" viewBox="0 0 10 10"><path d="M2.6,8 L7.4,3.4" stroke="#f4f4f4" stroke-width="1.5"/></svg>
<div class="t" style="left:823px;top:91.75999999999999px;font-size:8.7px;">ID03</div>
<div class="t" style="left:846px;top:91.75999999999999px;font-size:8.7px;">r</div>
<div class="f" style="left:850.5px;top:92.2px;width:47.5px;height:11px;"></div>
<div class="t" style="left:852px;top:91.75999999999999px;font-size:8.4px;">0</div>
<div class="t" style="left:900px;top:91.75999999999999px;font-size:8.7px;">g</div>
<div class="f" style="left:905.5px;top:92.2px;width:47.5px;height:11px;"></div>
<div class="t" style="left:907px;top:91.75999999999999px;font-size:8.4px;">0</div>
<div class="t" style="left:955.5px;top:91.75999999999999px;font-size:8.7px;">b</div>
<div class="f" style="left:961px;top:92.2px;width:47.5px;height:11px;"></div>
<div class="t" style="left:962.5px;top:91.75999999999999px;font-size:8.4px;">0</div>
<div class="a" style="left:1209px;top:92.8px;width:9.6px;height:9.6px;background:#000;border:0.8px solid #505050"></div>
<div class="a" style="left:1221.8px;top:93.0px;width:9.2px;height:9.2px;border-radius:50%;background:conic-gradient(from 0deg,#9890e8,#e888c8,#f09090,#d8d878,#80e080,#78d8c8,#9890e8)"></div>
<div class="a" style="left:1223.9px;top:95.1px;width:5px;height:5px;border-radius:50%;background:radial-gradient(#fff,rgba(255,255,255,0))"></div>
<div class="a" style="left:1233.6px;top:92.6px;width:10.2px;height:10.2px;background:#272727;"></div>
<div class="t" style="left:1236px;top:92.06px;font-size:8.2px;color:#c8c8c8;text-shadow:0 0 0.4px #c8c8c8;font-weight:bold">3</div>
<div class="a" style="left:1245.5px;top:92.2px;width:12.2px;height:10.8px;background:#474747;border:1px solid #3c3c3c"></div>
<svg class="a" style="left:1245.5px;top:92.2px" width="12" height="11" viewBox="0 0 12 11"><path d="M2.6,8.6 L4.6,3.2 L7.4,7.8 L9.6,2.6" fill="none" stroke="#6c6c6c" stroke-width="1.3" stroke-linejoin="round"/></svg>
<div class="t" style="left:823px;top:106.44px;font-size:8.7px;">ID04</div>
<div class="t" style="left:846px;top:106.44px;font-size:8.7px;">r</div>
<div class="f" style="left:850.5px;top:106.8px;width:47.5px;height:11px;"></div>
<div class="t" style="left:852px;top:106.44px;font-size:8.4px;">0</div>
<div class="t" style="left:900px;top:106.44px;font-size:8.7px;">g</div>
<div class="f" style="left:905.5px;top:106.8px;width:47.5px;height:11px;"></div>
<div class="t" style="left:907px;top:106.44px;font-size:8.4px;">0</div>
<div class="t" style="left:955.5px;top:106.44px;font-size:8.7px;">b</div>
<div class="f" style="left:961px;top:106.8px;width:47.5px;height:11px;"></div>
<div class="t" style="left:962.5px;top:106.44px;font-size:8.4px;">0</div>
<div class="a" style="left:1209px;top:107.39999999999999px;width:9.6px;height:9.6px;background:#000;border:0.8px solid #505050"></div>
<div class="a" style="left:1221.8px;top:107.6px;width:9.2px;height:9.2px;border-radius:50%;background:conic-gradient(from 0deg,#9890e8,#e888c8,#f09090,#d8d878,#80e080,#78d8c8,#9890e8)"></div>
<div class="a" style="left:1223.9px;top:109.69999999999999px;width:5px;height:5px;border-radius:50%;background:radial-gradient(#fff,rgba(255,255,255,0))"></div>
<div class="a" style="left:1233.6px;top:107.19999999999999px;width:10.2px;height:10.2px;background:#272727;"></div>
<div class="t" style="left:1236px;top:106.74000000000001px;font-size:8.2px;color:#c8c8c8;text-shadow:0 0 0.4px #c8c8c8;font-weight:bold">3</div>
<div class="a" style="left:1245.5px;top:106.8px;width:12.2px;height:10.8px;background:#474747;border:1px solid #3c3c3c"></div>
<svg class="a" style="left:1245.5px;top:106.8px" width="12" height="11" viewBox="0 0 12 11"><path d="M2.6,8.6 L4.6,3.2 L7.4,7.8 L9.6,2.6" fill="none" stroke="#6c6c6c" stroke-width="1.3" stroke-linejoin="round"/></svg>
<div class="t" style="left:823px;top:121.11999999999999px;font-size:8.7px;">ID05</div>
<div class="t" style="left:846px;top:121.11999999999999px;font-size:8.7px;">r</div>
<div class="f" style="left:850.5px;top:121.5px;width:47.5px;height:11px;"></div>
<div class="t" style="left:852px;top:121.11999999999999px;font-size:8.4px;">0</div>
<div class="t" style="left:900px;top:121.11999999999999px;font-size:8.7px;">g</div>
<div class="f" style="left:905.5px;top:121.5px;width:47.5px;height:11px;"></div>
<div class="t" style="left:907px;top:121.11999999999999px;font-size:8.4px;">0</div>
<div class="t" style="left:955.5px;top:121.11999999999999px;font-size:8.7px;">b</div>
<div class="f" style="left:961px;top:121.5px;width:47.5px;height:11px;"></div>
<div class="t" style="left:962.5px;top:121.11999999999999px;font-size:8.4px;">0</div>
<div class="a" style="left:1209px;top:122.1px;width:9.6px;height:9.6px;background:#000;border:0.8px solid #505050"></div>
<div class="a" style="left:1221.8px;top:122.3px;width:9.2px;height:9.2px;border-radius:50%;background:conic-gradient(from 0deg,#9890e8,#e888c8,#f09090,#d8d878,#80e080,#78d8c8,#9890e8)"></div>
<div class="a" style="left:1223.9px;top:124.39999999999999px;width:5px;height:5px;border-radius:50%;background:radial-gradient(#fff,rgba(255,255,255,0))"></div>
<div class="a" style="left:1233.6px;top:121.89999999999999px;width:10.2px;height:10.2px;background:#272727;"></div>
<div class="t" style="left:1236px;top:121.42px;font-size:8.2px;color:#c8c8c8;text-shadow:0 0 0.4px #c8c8c8;font-weight:bold">3</div>
<div class="a" style="left:1245.5px;top:121.5px;width:12.2px;height:10.8px;background:#474747;border:1px solid #3c3c3c"></div>
<svg class="a" style="left:1245.5px;top:121.5px" width="12" height="11" viewBox="0 0 12 11"><path d="M2.6,8.6 L4.6,3.2 L7.4,7.8 L9.6,2.6" fill="none" stroke="#6c6c6c" stroke-width="1.3" stroke-linejoin="round"/></svg>
<div class="t" style="left:823px;top:135.79999999999998px;font-size:8.7px;">ID06</div>
<div class="t" style="left:846px;top:135.79999999999998px;font-size:8.7px;">r</div>
<div class="f" style="left:850.5px;top:136.2px;width:47.5px;height:11px;"></div>
<div class="t" style="left:852px;top:135.79999999999998px;font-size:8.4px;">0</div>
<div class="t" style="left:900px;top:135.79999999999998px;font-size:8.7px;">g</div>
<div class="f" style="left:905.5px;top:136.2px;width:47.5px;height:11px;"></div>
<div class="t" style="left:907px;top:135.79999999999998px;font-size:8.4px;">0</div>
<div class="t" style="left:955.5px;top:135.79999999999998px;font-size:8.7px;">b</div>
<div class="f" style="left:961px;top:136.2px;width:47.5px;height:11px;"></div>
<div class="t" style="left:962.5px;top:135.79999999999998px;font-size:8.4px;">0</div>
<div class="a" style="left:1209px;top:136.79999999999998px;width:9.6px;height:9.6px;background:#000;border:0.8px solid #505050"></div>
<div class="a" style="left:1221.8px;top:136.99999999999997px;width:9.2px;height:9.2px;border-radius:50%;background:conic-gradient(from 0deg,#9890e8,#e888c8,#f09090,#d8d878,#80e080,#78d8c8,#9890e8)"></div>
<div class="a" style="left:1223.9px;top:139.1px;width:5px;height:5px;border-radius:50%;background:radial-gradient(#fff,rgba(255,255,255,0))"></div>
<div class="a" style="left:1233.6px;top:136.6px;width:10.2px;height:10.2px;background:#272727;"></div>
<div class="t" style="left:1236px;top:136.1px;font-size:8.2px;color:#c8c8c8;text-shadow:0 0 0.4px #c8c8c8;font-weight:bold">3</div>
<div class="a" style="left:1245.5px;top:136.2px;width:12.2px;height:10.8px;background:#474747;border:1px solid #3c3c3c"></div>
<svg class="a" style="left:1245.5px;top:136.2px" width="12" height="11" viewBox="0 0 12 11"><path d="M2.6,8.6 L4.6,3.2 L7.4,7.8 L9.6,2.6" fill="none" stroke="#6c6c6c" stroke-width="1.3" stroke-linejoin="round"/></svg>
<div class="t" style="left:823px;top:150.48px;font-size:8.7px;">ID07</div>
<div class="t" style="left:846px;top:150.48px;font-size:8.7px;">r</div>
<div class="f" style="left:850.5px;top:150.9px;width:47.5px;height:11px;"></div>
<div class="t" style="left:852px;top:150.48px;font-size:8.4px;">0</div>
<div class="t" style="left:900px;top:150.48px;font-size:8.7px;">g</div>
<div class="f" style="left:905.5px;top:150.9px;width:47.5px;height:11px;"></div>
<div class="t" style="left:907px;top:150.48px;font-size:8.4px;">0</div>
<div class="t" style="left:955.5px;top:150.48px;font-size:8.7px;">b</div>
<div class="f" style="left:961px;top:150.9px;width:47.5px;height:11px;"></div>
<div class="t" style="left:962.5px;top:150.48px;font-size:8.4px;">0</div>
<div class="a" style="left:1209px;top:151.5px;width:9.6px;height:9.6px;background:#000;border:0.8px solid #505050"></div>
<div class="a" style="left:1221.8px;top:151.7px;width:9.2px;height:9.2px;border-radius:50%;background:conic-gradient(from 0deg,#9890e8,#e888c8,#f09090,#d8d878,#80e080,#78d8c8,#9890e8)"></div>
<div class="a" style="left:1223.9px;top:153.8px;width:5px;height:5px;border-radius:50%;background:radial-gradient(#fff,rgba(255,255,255,0))"></div>
<div class="a" style="left:1233.6px;top:151.3px;width:10.2px;height:10.2px;background:#272727;"></div>
<div class="t" style="left:1236px;top:150.78px;font-size:8.2px;color:#c8c8c8;text-shadow:0 0 0.4px #c8c8c8;font-weight:bold">3</div>
<div class="a" style="left:1245.5px;top:150.9px;width:12.2px;height:10.8px;background:#474747;border:1px solid #3c3c3c"></div>
<svg class="a" style="left:1245.5px;top:150.9px" width="12" height="11" viewBox="0 0 12 11"><path d="M2.6,8.6 L4.6,3.2 L7.4,7.8 L9.6,2.6" fill="none" stroke="#6c6c6c" stroke-width="1.3" stroke-linejoin="round"/></svg>
<div class="t" style="left:823px;top:165.16px;font-size:8.7px;">ID08</div>
<div class="t" style="left:846px;top:165.16px;font-size:8.7px;">r</div>
<div class="f" style="left:850.5px;top:165.6px;width:47.5px;height:11px;"></div>
<div class="t" style="left:852px;top:165.16px;font-size:8.4px;">0</div>
<div class="t" style="left:900px;top:165.16px;font-size:8.7px;">g</div>
<div class="f" style="left:905.5px;top:165.6px;width:47.5px;height:11px;"></div>
<div class="t" style="left:907px;top:165.16px;font-size:8.4px;">0</div>
<div class="t" style="left:955.5px;top:165.16px;font-size:8.7px;">b</div>
<div class="f" style="left:961px;top:165.6px;width:47.5px;height:11px;"></div>
<div class="t" style="left:962.5px;top:165.16px;font-size:8.4px;">0</div>
<div class="a" style="left:1209px;top:166.2px;width:9.6px;height:9.6px;background:#000;border:0.8px solid #505050"></div>
<div class="a" style="left:1221.8px;top:166.39999999999998px;width:9.2px;height:9.2px;border-radius:50%;background:conic-gradient(from 0deg,#9890e8,#e888c8,#f09090,#d8d878,#80e080,#78d8c8,#9890e8)"></div>
<div class="a" style="left:1223.9px;top:168.5px;width:5px;height:5px;border-radius:50%;background:radial-gradient(#fff,rgba(255,255,255,0))"></div>
<div class="a" style="left:1233.6px;top:166.0px;width:10.2px;height:10.2px;background:#272727;"></div>
<div class="t" style="left:1236px;top:165.46px;font-size:8.2px;color:#c8c8c8;text-shadow:0 0 0.4px #c8c8c8;font-weight:bold">3</div>
<div class="a" style="left:1245.5px;top:165.6px;width:12.2px;height:10.8px;background:#474747;border:1px solid #3c3c3c"></div>
<svg class="a" style="left:1245.5px;top:165.6px" width="12" height="11" viewBox="0 0 12 11"><path d="M2.6,8.6 L4.6,3.2 L7.4,7.8 L9.6,2.6" fill="none" stroke="#6c6c6c" stroke-width="1.3" stroke-linejoin="round"/></svg>
<div class="t" style="left:823px;top:179.84px;font-size:8.7px;">ID09</div>
<div class="t" style="left:846px;top:179.84px;font-size:8.7px;">r</div>
<div class="f" style="left:850.5px;top:180.2px;width:47.5px;height:11px;"></div>
<div class="t" style="left:852px;top:179.84px;font-size:8.4px;">0</div>
<div class="t" style="left:900px;top:179.84px;font-size:8.7px;">g</div>
<div class="f" style="left:905.5px;top:180.2px;width:47.5px;height:11px;"></div>
<div class="t" style="left:907px;top:179.84px;font-size:8.4px;">0</div>
<div class="t" style="left:955.5px;top:179.84px;font-size:8.7px;">b</div>
<div class="f" style="left:961px;top:180.2px;width:47.5px;height:11px;"></div>
<div class="t" style="left:962.5px;top:179.84px;font-size:8.4px;">0</div>
<div class="a" style="left:1209px;top:180.79999999999998px;width:9.6px;height:9.6px;background:#000;border:0.8px solid #505050"></div>
<div class="a" style="left:1221.8px;top:180.99999999999997px;width:9.2px;height:9.2px;border-radius:50%;background:conic-gradient(from 0deg,#9890e8,#e888c8,#f09090,#d8d878,#80e080,#78d8c8,#9890e8)"></div>
<div class="a" style="left:1223.9px;top:183.1px;width:5px;height:5px;border-radius:50%;background:radial-gradient(#fff,rgba(255,255,255,0))"></div>
<div class="a" style="left:1233.6px;top:180.6px;width:10.2px;height:10.2px;background:#272727;"></div>
<div class="t" style="left:1236px;top:180.14000000000001px;font-size:8.2px;color:#c8c8c8;text-shadow:0 0 0.4px #c8c8c8;font-weight:bold">3</div>
<div class="a" style="left:1245.5px;top:180.2px;width:12.2px;height:10.8px;background:#474747;border:1px solid #3c3c3c"></div>
<svg class="a" style="left:1245.5px;top:180.2px" width="12" height="11" viewBox="0 0 12 11"><path d="M2.6,8.6 L4.6,3.2 L7.4,7.8 L9.6,2.6" fill="none" stroke="#6c6c6c" stroke-width="1.3" stroke-linejoin="round"/></svg>
<div class="t" style="left:823px;top:194.52px;font-size:8.7px;">ID10</div>
<div class="t" style="left:846px;top:194.52px;font-size:8.7px;">r</div>
<div class="f" style="left:850.5px;top:194.9px;width:47.5px;height:11px;"></div>
<div class="t" style="left:852px;top:194.52px;font-size:8.4px;">0</div>
<div class="t" style="left:900px;top:194.52px;font-size:8.7px;">g</div>
<div class="f" style="left:905.5px;top:194.9px;width:47.5px;height:11px;"></div>
<div class="t" style="left:907px;top:194.52px;font-size:8.4px;">0</div>
<div class="t" style="left:955.5px;top:194.52px;font-size:8.7px;">b</div>
<div class="f" style="left:961px;top:194.9px;width:47.5px;height:11px;"></div>
<div class="t" style="left:962.5px;top:194.52px;font-size:8.4px;">0</div>
<div class="a" style="left:1209px;top:195.5px;width:9.6px;height:9.6px;background:#000;border:0.8px solid #505050"></div>
<div class="a" style="left:1221.8px;top:195.7px;width:9.2px;height:9.2px;border-radius:50%;background:conic-gradient(from 0deg,#9890e8,#e888c8,#f09090,#d8d878,#80e080,#78d8c8,#9890e8)"></div>
<div class="a" style="left:1223.9px;top:197.8px;width:5px;height:5px;border-radius:50%;background:radial-gradient(#fff,rgba(255,255,255,0))"></div>
<div class="a" style="left:1233.6px;top:195.3px;width:10.2px;height:10.2px;background:#272727;"></div>
<div class="t" style="left:1236px;top:194.82000000000002px;font-size:8.2px;color:#c8c8c8;text-shadow:0 0 0.4px #c8c8c8;font-weight:bold">3</div>
<div class="a" style="left:1245.5px;top:194.9px;width:12.2px;height:10.8px;background:#474747;border:1px solid #3c3c3c"></div>
<svg class="a" style="left:1245.5px;top:194.9px" width="12" height="11" viewBox="0 0 12 11"><path d="M2.6,8.6 L4.6,3.2 L7.4,7.8 L9.6,2.6" fill="none" stroke="#6c6c6c" stroke-width="1.3" stroke-linejoin="round"/></svg>
<div class="t" style="left:823px;top:209.20000000000002px;font-size:8.7px;">ID11</div>
<div class="t" style="left:846px;top:209.20000000000002px;font-size:8.7px;">r</div>
<div class="f" style="left:850.5px;top:209.6px;width:47.5px;height:11px;"></div>
<div class="t" style="left:852px;top:209.20000000000002px;font-size:8.4px;">0</div>
<div class="t" style="left:900px;top:209.20000000000002px;font-size:8.7px;">g</div>
<div class="f" style="left:905.5px;top:209.6px;width:47.5px;height:11px;"></div>
<div class="t" style="left:907px;top:209.20000000000002px;font-size:8.4px;">0</div>
<div class="t" style="left:955.5px;top:209.20000000000002px;font-size:8.7px;">b</div>
<div class="f" style="left:961px;top:209.6px;width:47.5px;height:11px;"></div>
<div class="t" style="left:962.5px;top:209.20000000000002px;font-size:8.4px;">0</div>
<div class="a" style="left:1209px;top:210.2px;width:9.6px;height:9.6px;background:#000;border:0.8px solid #505050"></div>
<div class="a" style="left:1221.8px;top:210.39999999999998px;width:9.2px;height:9.2px;border-radius:50%;background:conic-gradient(from 0deg,#9890e8,#e888c8,#f09090,#d8d878,#80e080,#78d8c8,#9890e8)"></div>
<div class="a" style="left:1223.9px;top:212.5px;width:5px;height:5px;border-radius:50%;background:radial-gradient(#fff,rgba(255,255,255,0))"></div>
<div class="a" style="left:1233.6px;top:210.0px;width:10.2px;height:10.2px;background:#272727;"></div>
<div class="t" style="left:1236px;top:209.50000000000003px;font-size:8.2px;color:#c8c8c8;text-shadow:0 0 0.4px #c8c8c8;font-weight:bold">3</div>
<div class="a" style="left:1245.5px;top:209.6px;width:12.2px;height:10.8px;background:#474747;border:1px solid #3c3c3c"></div>
<svg class="a" style="left:1245.5px;top:209.6px" width="12" height="11" viewBox="0 0 12 11"><path d="M2.6,8.6 L4.6,3.2 L7.4,7.8 L9.6,2.6" fill="none" stroke="#6c6c6c" stroke-width="1.3" stroke-linejoin="round"/></svg>
<div class="t" style="left:823px;top:223.87999999999997px;font-size:8.7px;">ID12</div>
<div class="t" style="left:846px;top:223.87999999999997px;font-size:8.7px;">r</div>
<div class="f" style="left:850.5px;top:224.3px;width:47.5px;height:11px;"></div>
<div class="t" style="left:852px;top:223.87999999999997px;font-size:8.4px;">0</div>
<div class="t" style="left:900px;top:223.87999999999997px;font-size:8.7px;">g</div>
<div class="f" style="left:905.5px;top:224.3px;width:47.5px;height:11px;"></div>
<div class="t" style="left:907px;top:223.87999999999997px;font-size:8.4px;">0</div>
<div class="t" style="left:955.5px;top:223.87999999999997px;font-size:8.7px;">b</div>
<div class="f" style="left:961px;top:224.3px;width:47.5px;height:11px;"></div>
<div class="t" style="left:962.5px;top:223.87999999999997px;font-size:8.4px;">0</div>
<div class="a" style="left:1209px;top:224.9px;width:9.6px;height:9.6px;background:#000;border:0.8px solid #505050"></div>
<div class="a" style="left:1221.8px;top:225.1px;width:9.2px;height:9.2px;border-radius:50%;background:conic-gradient(from 0deg,#9890e8,#e888c8,#f09090,#d8d878,#80e080,#78d8c8,#9890e8)"></div>
<div class="a" style="left:1223.9px;top:227.20000000000002px;width:5px;height:5px;border-radius:50%;background:radial-gradient(#fff,rgba(255,255,255,0))"></div>
<div class="a" style="left:1233.6px;top:224.70000000000002px;width:10.2px;height:10.2px;background:#272727;"></div>
<div class="t" style="left:1236px;top:224.17999999999998px;font-size:8.2px;color:#c8c8c8;text-shadow:0 0 0.4px #c8c8c8;font-weight:bold">3</div>
<div class="a" style="left:1245.5px;top:224.3px;width:12.2px;height:10.8px;background:#474747;border:1px solid #3c3c3c"></div>
<svg class="a" style="left:1245.5px;top:224.3px" width="12" height="11" viewBox="0 0 12 11"><path d="M2.6,8.6 L4.6,3.2 L7.4,7.8 L9.6,2.6" fill="none" stroke="#6c6c6c" stroke-width="1.3" stroke-linejoin="round"/></svg>
<div class="t" style="left:823px;top:238.55999999999997px;font-size:8.7px;">ID13</div>
<div class="t" style="left:846px;top:238.55999999999997px;font-size:8.7px;">r</div>
<div class="f" style="left:850.5px;top:239.0px;width:47.5px;height:11px;"></div>
<div class="t" style="left:852px;top:238.55999999999997px;font-size:8.4px;">0</div>
<div class="t" style="left:900px;top:238.55999999999997px;font-size:8.7px;">g</div>
<div class="f" style="left:905.5px;top:239.0px;width:47.5px;height:11px;"></div>
<div class="t" style="left:907px;top:238.55999999999997px;font-size:8.4px;">0</div>
<div class="t" style="left:955.5px;top:238.55999999999997px;font-size:8.7px;">b</div>
<div class="f" style="left:961px;top:239.0px;width:47.5px;height:11px;"></div>
<div class="t" style="left:962.5px;top:238.55999999999997px;font-size:8.4px;">0</div>
<div class="a" style="left:1209px;top:239.6px;width:9.6px;height:9.6px;background:#000;border:0.8px solid #505050"></div>
<div class="a" style="left:1221.8px;top:239.79999999999998px;width:9.2px;height:9.2px;border-radius:50%;background:conic-gradient(from 0deg,#9890e8,#e888c8,#f09090,#d8d878,#80e080,#78d8c8,#9890e8)"></div>
<div class="a" style="left:1223.9px;top:241.9px;width:5px;height:5px;border-radius:50%;background:radial-gradient(#fff,rgba(255,255,255,0))"></div>
<div class="a" style="left:1233.6px;top:239.4px;width:10.2px;height:10.2px;background:#272727;"></div>
<div class="t" style="left:1236px;top:238.85999999999999px;font-size:8.2px;color:#c8c8c8;text-shadow:0 0 0.4px #c8c8c8;font-weight:bold">3</div>
<div class="a" style="left:1245.5px;top:239.0px;width:12.2px;height:10.8px;background:#474747;border:1px solid #3c3c3c"></div>
<svg class="a" style="left:1245.5px;top:239.0px" width="12" height="11" viewBox="0 0 12 11"><path d="M2.6,8.6 L4.6,3.2 L7.4,7.8 L9.6,2.6" fill="none" stroke="#6c6c6c" stroke-width="1.3" stroke-linejoin="round"/></svg>
<div class="t" style="left:823px;top:253.23999999999998px;font-size:8.7px;">ID14</div>
<div class="t" style="left:846px;top:253.23999999999998px;font-size:8.7px;">r</div>
<div class="f" style="left:850.5px;top:253.6px;width:47.5px;height:11px;"></div>
<div class="t" style="left:852px;top:253.23999999999998px;font-size:8.4px;">0</div>
<div class="t" style="left:900px;top:253.23999999999998px;font-size:8.7px;">g</div>
<div class="f" style="left:905.5px;top:253.6px;width:47.5px;height:11px;"></div>
<div class="t" style="left:907px;top:253.23999999999998px;font-size:8.4px;">0</div>
<div class="t" style="left:955.5px;top:253.23999999999998px;font-size:8.7px;">b</div>
<div class="f" style="left:961px;top:253.6px;width:47.5px;height:11px;"></div>
<div class="t" style="left:962.5px;top:253.23999999999998px;font-size:8.4px;">0</div>
<div class="a" style="left:1209px;top:254.2px;width:9.6px;height:9.6px;background:#000;border:0.8px solid #505050"></div>
<div class="a" style="left:1221.8px;top:254.39999999999998px;width:9.2px;height:9.2px;border-radius:50%;background:conic-gradient(from 0deg,#9890e8,#e888c8,#f09090,#d8d878,#80e080,#78d8c8,#9890e8)"></div>
<div class="a" style="left:1223.9px;top:256.5px;width:5px;height:5px;border-radius:50%;background:radial-gradient(#fff,rgba(255,255,255,0))"></div>
<div class="a" style="left:1233.6px;top:254.0px;width:10.2px;height:10.2px;background:#272727;"></div>
<div class="t" style="left:1236px;top:253.54px;font-size:8.2px;color:#c8c8c8;text-shadow:0 0 0.4px #c8c8c8;font-weight:bold">3</div>
<div class="a" style="left:1245.5px;top:253.6px;width:12.2px;height:10.8px;background:#474747;border:1px solid #3c3c3c"></div>
<svg class="a" style="left:1245.5px;top:253.6px" width="12" height="11" viewBox="0 0 12 11"><path d="M2.6,8.6 L4.6,3.2 L7.4,7.8 L9.6,2.6" fill="none" stroke="#6c6c6c" stroke-width="1.3" stroke-linejoin="round"/></svg>
<div class="t" style="left:823px;top:267.92px;font-size:8.7px;">ID15</div>
<div class="t" style="left:846px;top:267.92px;font-size:8.7px;">r</div>
<div class="f" style="left:850.5px;top:268.3px;width:47.5px;height:11px;"></div>
<div class="t" style="left:852px;top:267.92px;font-size:8.4px;">0</div>
<div class="t" style="left:900px;top:267.92px;font-size:8.7px;">g</div>
<div class="f" style="left:905.5px;top:268.3px;width:47.5px;height:11px;"></div>
<div class="t" style="left:907px;top:267.92px;font-size:8.4px;">0</div>
<div class="t" style="left:955.5px;top:267.92px;font-size:8.7px;">b</div>
<div class="f" style="left:961px;top:268.3px;width:47.5px;height:11px;"></div>
<div class="t" style="left:962.5px;top:267.92px;font-size:8.4px;">0</div>
<div class="a" style="left:1209px;top:268.90000000000003px;width:9.6px;height:9.6px;background:#000;border:0.8px solid #505050"></div>
<div class="a" style="left:1221.8px;top:269.1px;width:9.2px;height:9.2px;border-radius:50%;background:conic-gradient(from 0deg,#9890e8,#e888c8,#f09090,#d8d878,#80e080,#78d8c8,#9890e8)"></div>
<div class="a" style="left:1223.9px;top:271.20000000000005px;width:5px;height:5px;border-radius:50%;background:radial-gradient(#fff,rgba(255,255,255,0))"></div>
<div class="a" style="left:1233.6px;top:268.70000000000005px;width:10.2px;height:10.2px;background:#272727;"></div>
<div class="t" style="left:1236px;top:268.21999999999997px;font-size:8.2px;color:#c8c8c8;text-shadow:0 0 0.4px #c8c8c8;font-weight:bold">3</div>
<div class="a" style="left:1245.5px;top:268.3px;width:12.2px;height:10.8px;background:#474747;border:1px solid #3c3c3c"></div>
<svg class="a" style="left:1245.5px;top:268.3px" width="12" height="11" viewBox="0 0 12 11"><path d="M2.6,8.6 L4.6,3.2 L7.4,7.8 L9.6,2.6" fill="none" stroke="#6c6c6c" stroke-width="1.3" stroke-linejoin="round"/></svg>
<div class="t" style="left:823px;top:282.6px;font-size:8.7px;">ID16</div>
<div class="t" style="left:846px;top:282.6px;font-size:8.7px;">r</div>
<div class="f" style="left:850.5px;top:283.0px;width:47.5px;height:11px;"></div>
<div class="t" style="left:852px;top:282.6px;font-size:8.4px;">0</div>
<div class="t" style="left:900px;top:282.6px;font-size:8.7px;">g</div>
<div class="f" style="left:905.5px;top:283.0px;width:47.5px;height:11px;"></div>
<div class="t" style="left:907px;top:282.6px;font-size:8.4px;">0</div>
<div class="t" style="left:955.5px;top:282.6px;font-size:8.7px;">b</div>
<div class="f" style="left:961px;top:283.0px;width:47.5px;height:11px;"></div>
<div class="t" style="left:962.5px;top:282.6px;font-size:8.4px;">0</div>
<div class="a" style="left:1209px;top:283.6px;width:9.6px;height:9.6px;background:#000;border:0.8px solid #505050"></div>
<div class="a" style="left:1221.8px;top:283.8px;width:9.2px;height:9.2px;border-radius:50%;background:conic-gradient(from 0deg,#9890e8,#e888c8,#f09090,#d8d878,#80e080,#78d8c8,#9890e8)"></div>
<div class="a" style="left:1223.9px;top:285.90000000000003px;width:5px;height:5px;border-radius:50%;background:radial-gradient(#fff,rgba(255,255,255,0))"></div>
<div class="a" style="left:1233.6px;top:283.40000000000003px;width:10.2px;height:10.2px;background:#272727;"></div>
<div class="t" style="left:1236px;top:282.9px;font-size:8.2px;color:#c8c8c8;text-shadow:0 0 0.4px #c8c8c8;font-weight:bold">3</div>
<div class="a" style="left:1245.5px;top:283.0px;width:12.2px;height:10.8px;background:#474747;border:1px solid #3c3c3c"></div>
<svg class="a" style="left:1245.5px;top:283.0px" width="12" height="11" viewBox="0 0 12 11"><path d="M2.6,8.6 L4.6,3.2 L7.4,7.8 L9.6,2.6" fill="none" stroke="#6c6c6c" stroke-width="1.3" stroke-linejoin="round"/></svg>
<div class="t" style="left:823px;top:297.28000000000003px;font-size:8.7px;">ID17</div>
<div class="t" style="left:846px;top:297.28000000000003px;font-size:8.7px;">r</div>
<div class="f" style="left:850.5px;top:297.7px;width:47.5px;height:11px;"></div>
<div class="t" style="left:852px;top:297.28000000000003px;font-size:8.4px;">0</div>
<div class="t" style="left:900px;top:297.28000000000003px;font-size:8.7px;">g</div>
<div class="f" style="left:905.5px;top:297.7px;width:47.5px;height:11px;"></div>
<div class="t" style="left:907px;top:297.28000000000003px;font-size:8.4px;">0</div>
<div class="t" style="left:955.5px;top:297.28000000000003px;font-size:8.7px;">b</div>
<div class="f" style="left:961px;top:297.7px;width:47.5px;height:11px;"></div>
<div class="t" style="left:962.5px;top:297.28000000000003px;font-size:8.4px;">0</div>
<div class="a" style="left:1209px;top:298.3px;width:9.6px;height:9.6px;background:#000;border:0.8px solid #505050"></div>
<div class="a" style="left:1221.8px;top:298.5px;width:9.2px;height:9.2px;border-radius:50%;background:conic-gradient(from 0deg,#9890e8,#e888c8,#f09090,#d8d878,#80e080,#78d8c8,#9890e8)"></div>
<div class="a" style="left:1223.9px;top:300.6px;width:5px;height:5px;border-radius:50%;background:radial-gradient(#fff,rgba(255,255,255,0))"></div>
<div class="a" style="left:1233.6px;top:298.1px;width:10.2px;height:10.2px;background:#272727;"></div>
<div class="t" style="left:1236px;top:297.58px;font-size:8.2px;color:#c8c8c8;text-shadow:0 0 0.4px #c8c8c8;font-weight:bold">3</div>
<div class="a" style="left:1245.5px;top:297.7px;width:12.2px;height:10.8px;background:#474747;border:1px solid #3c3c3c"></div>
<svg class="a" style="left:1245.5px;top:297.7px" width="12" height="11" viewBox="0 0 12 11"><path d="M2.6,8.6 L4.6,3.2 L7.4,7.8 L9.6,2.6" fill="none" stroke="#6c6c6c" stroke-width="1.3" stroke-linejoin="round"/></svg>
<div class="t" style="left:823px;top:311.96000000000004px;font-size:8.7px;">ID18</div>
<div class="t" style="left:846px;top:311.96000000000004px;font-size:8.7px;">r</div>
<div class="f" style="left:850.5px;top:312.4px;width:47.5px;height:11px;"></div>
<div class="t" style="left:852px;top:311.96000000000004px;font-size:8.4px;">0</div>
<div class="t" style="left:900px;top:311.96000000000004px;font-size:8.7px;">g</div>
<div class="f" style="left:905.5px;top:312.4px;width:47.5px;height:11px;"></div>
<div class="t" style="left:907px;top:311.96000000000004px;font-size:8.4px;">0</div>
<div class="t" style="left:955.5px;top:311.96000000000004px;font-size:8.7px;">b</div>
<div class="f" style="left:961px;top:312.4px;width:47.5px;height:11px;"></div>
<div class="t" style="left:962.5px;top:311.96000000000004px;font-size:8.4px;">0</div>
<div class="a" style="left:1209px;top:313.0px;width:9.6px;height:9.6px;background:#000;border:0.8px solid #505050"></div>
<div class="a" style="left:1221.8px;top:313.2px;width:9.2px;height:9.2px;border-radius:50%;background:conic-gradient(from 0deg,#9890e8,#e888c8,#f09090,#d8d878,#80e080,#78d8c8,#9890e8)"></div>
<div class="a" style="left:1223.9px;top:315.3px;width:5px;height:5px;border-radius:50%;background:radial-gradient(#fff,rgba(255,255,255,0))"></div>
<div class="a" style="left:1233.6px;top:312.8px;width:10.2px;height:10.2px;background:#272727;"></div>
<div class="t" style="left:1236px;top:312.26px;font-size:8.2px;color:#c8c8c8;text-shadow:0 0 0.4px #c8c8c8;font-weight:bold">3</div>
<div class="a" style="left:1245.5px;top:312.4px;width:12.2px;height:10.8px;background:#474747;border:1px solid #3c3c3c"></div>
<svg class="a" style="left:1245.5px;top:312.4px" width="12" height="11" viewBox="0 0 12 11"><path d="M2.6,8.6 L4.6,3.2 L7.4,7.8 L9.6,2.6" fill="none" stroke="#6c6c6c" stroke-width="1.3" stroke-linejoin="round"/></svg>
<div class="t" style="left:823px;top:326.64000000000004px;font-size:8.7px;">ID19</div>
<div class="t" style="left:846px;top:326.64000000000004px;font-size:8.7px;">r</div>
<div class="f" style="left:850.5px;top:327.0px;width:47.5px;height:11px;"></div>
<div class="t" style="left:852px;top:326.64000000000004px;font-size:8.4px;">0</div>
<div class="t" style="left:900px;top:326.64000000000004px;font-size:8.7px;">g</div>
<div class="f" style="left:905.5px;top:327.0px;width:47.5px;height:11px;"></div>
<div class="t" style="left:907px;top:326.64000000000004px;font-size:8.4px;">0</div>
<div class="t" style="left:955.5px;top:326.64000000000004px;font-size:8.7px;">b</div>
<div class="f" style="left:961px;top:327.0px;width:47.5px;height:11px;"></div>
<div class="t" style="left:962.5px;top:326.64000000000004px;font-size:8.4px;">0</div>
<div class="a" style="left:1209px;top:327.6px;width:9.6px;height:9.6px;background:#000;border:0.8px solid #505050"></div>
<div class="a" style="left:1221.8px;top:327.8px;width:9.2px;height:9.2px;border-radius:50%;background:conic-gradient(from 0deg,#9890e8,#e888c8,#f09090,#d8d878,#80e080,#78d8c8,#9890e8)"></div>
<div class="a" style="left:1223.9px;top:329.90000000000003px;width:5px;height:5px;border-radius:50%;background:radial-gradient(#fff,rgba(255,255,255,0))"></div>
<div class="a" style="left:1233.6px;top:327.40000000000003px;width:10.2px;height:10.2px;background:#272727;"></div>
<div class="t" style="left:1236px;top:326.94px;font-size:8.2px;color:#c8c8c8;text-shadow:0 0 0.4px #c8c8c8;font-weight:bold">3</div>
<div class="a" style="left:1245.5px;top:327.0px;width:12.2px;height:10.8px;background:#474747;border:1px solid #3c3c3c"></div>
<svg class="a" style="left:1245.5px;top:327.0px" width="12" height="11" viewBox="0 0 12 11"><path d="M2.6,8.6 L4.6,3.2 L7.4,7.8 L9.6,2.6" fill="none" stroke="#6c6c6c" stroke-width="1.3" stroke-linejoin="round"/></svg>
<div class="t" style="left:823px;top:341.32000000000005px;font-size:8.7px;">ID20</div>
<div class="t" style="left:846px;top:341.32000000000005px;font-size:8.7px;">r</div>
<div class="f" style="left:850.5px;top:341.7px;width:47.5px;height:11px;"></div>
<div class="t" style="left:852px;top:341.32000000000005px;font-size:8.4px;">0</div>
<div class="t" style="left:900px;top:341.32000000000005px;font-size:8.7px;">g</div>
<div class="f" style="left:905.5px;top:341.7px;width:47.5px;height:11px;"></div>
<div class="t" style="left:907px;top:341.32000000000005px;font-size:8.4px;">0</div>
<div class="t" style="left:955.5px;top:341.32000000000005px;font-size:8.7px;">b</div>
<div class="f" style="left:961px;top:341.7px;width:47.5px;height:11px;"></div>
<div class="t" style="left:962.5px;top:341.32000000000005px;font-size:8.4px;">0</div>
<div class="a" style="left:1209px;top:342.3px;width:9.6px;height:9.6px;background:#000;border:0.8px solid #505050"></div>
<div class="a" style="left:1221.8px;top:342.5px;width:9.2px;height:9.2px;border-radius:50%;background:conic-gradient(from 0deg,#9890e8,#e888c8,#f09090,#d8d878,#80e080,#78d8c8,#9890e8)"></div>
<div class="a" style="left:1223.9px;top:344.6px;width:5px;height:5px;border-radius:50%;background:radial-gradient(#fff,rgba(255,255,255,0))"></div>
<div class="a" style="left:1233.6px;top:342.1px;width:10.2px;height:10.2px;background:#272727;"></div>
<div class="t" style="left:1236px;top:341.62px;font-size:8.2px;color:#c8c8c8;text-shadow:0 0 0.4px #c8c8c8;font-weight:bold">3</div>
<div class="a" style="left:1245.5px;top:341.7px;width:12.2px;height:10.8px;background:#474747;border:1px solid #3c3c3c"></div>
<svg class="a" style="left:1245.5px;top:341.7px" width="12" height="11" viewBox="0 0 12 11"><path d="M2.6,8.6 L4.6,3.2 L7.4,7.8 L9.6,2.6" fill="none" stroke="#6c6c6c" stroke-width="1.3" stroke-linejoin="round"/></svg>
<div class="a" style="left:815px;top:362.4px;width:451px;height:4.4px;background:#2a2a2a;background:linear-gradient(#313131,#242424)"></div>
<div class="a" style="left:815px;top:366.5px;width:451px;height:1.6px;background:#cccccc;"></div>
<div class="a" style="left:815px;top:368.1px;width:451px;height:0.9px;background:#222;"></div>
<div class="a" style="left:815px;top:369px;width:451px;height:13.8px;background:#454545;"></div>
<div class="a" style="left:819px;top:372px;border-left:3.5px solid transparent;border-right:3.5px solid transparent;border-top:5px solid #0a0a0a"></div>
<div class="a" style="left:833px;top:369px;width:13px;height:12px;background:#4e4e4e;border:1px solid #3a3a3a"></div>
<div class="a" style="left:848px;top:369px;width:13px;height:12px;background:#4e4e4e;border:1px solid #3a3a3a"></div>
<div class="a" style="left:851px;top:373px;width:7px;height:3px;background:#111;border-radius:1.5px"></div>
<div class="a" style="left:836px;top:371.5px;width:7px;height:7px;border:1px solid #222;border-radius:50%"></div>
<div class="a" style="left:870px;top:370px;width:267px;height:11px;background:#636363;"></div>
<div class="t" style="left:872px;top:369.5px;font-size:8.7px;color:#d8d8d8;text-shadow:0 0 0.4px #d8d8d8;">Read1</div>
<svg class="a" style="left:1140px;top:368px" width="126" height="14" viewBox="1140 0 126 14"><rect x="1146.2" y="2.8" width="7.6" height="7.6" fill="#e4e4e4" stroke="#1e1e1e" stroke-width="0.9"/><path d="M1147.6,9 L1152.4,4.2" stroke="#333" stroke-width="1.3"/><rect x="1161.7" y="2.8" width="7.6" height="7.6" fill="#e4e4e4" stroke="#1e1e1e" stroke-width="0.9"/><path d="M1163.1,9 L1167.9,4.2" stroke="#333" stroke-width="1.3"/><rect x="1173.5" y="1" width="14" height="12" fill="#4a4a4a" stroke="#3a3a3a" stroke-width="0.8"/><rect x="1189.5" y="1" width="14" height="12" fill="#4a4a4a" stroke="#3a3a3a" stroke-width="0.8"/><rect x="1204" y="1" width="14" height="12" fill="#4a4a4a" stroke="#3a3a3a" stroke-width="0.8"/><path d="M1176.6,8.4 q3.6,-4 8,0" fill="none" stroke="#606060" stroke-width="1.4"/><path d="M1192.6,8.4 q4.4,-4 8,0" fill="none" stroke="#606060" stroke-width="1.4"/><path d="M1208,5 h5 v4.4 h-4" fill="none" stroke="#606060" stroke-width="1.4"/><path d="M1244.2,9.8 L1249.2,4.6 M1246.4,4.2 h3.2 v3.2" fill="none" stroke="#141414" stroke-width="1.4"/><path d="M1257,4.4 l4.6,4.8 M1261.6,4.4 l-4.6,4.8" stroke="#141414" stroke-width="1.2"/></svg>
<div class="t" style="left:1230.5px;top:369.3px;font-size:8.6px;color:#111;text-shadow:0 0 0.4px #111;font-weight:bold">?</div>
<div class="a" style="left:815px;top:383.5px;width:451px;height:15px;background:#353535;"></div>
<div class="a" style="left:849px;top:397.9px;width:417px;height:1px;background:#2b2b2b;"></div>
<div class="t" style="left:815px;top:385.5px;font-size:8.7px;width:34px;text-align:center">Read</div>
<div class="a" style="left:849px;top:383.5px;width:56px;height:15px;background:#262626;border-right:1px solid #333"></div>
<div class="t" style="left:849px;top:385.5px;font-size:8.7px;width:56px;text-align:center">Sequence</div>
<div class="a" style="left:905px;top:383.5px;width:32px;height:15px;background:#262626;border-right:1px solid #333"></div>
<div class="t" style="left:905px;top:385.5px;font-size:8.7px;width:32px;text-align:center">Node</div>
<div class="t" style="left:780px;top:405px;font-size:8.7px;width:100.5px;text-align:right">file</div>
<div class="f" style="left:886px;top:406px;width:357px;height:10.5px;"></div>
<div class="t" style="left:888px;top:404.8px;font-size:8.8px;">C:/Grafik/Images/Renders_Raw/tmp/MultiColorID_Test.renderId.exr</div>
<div class="a" style="left:1249px;top:407px;width:8.5px;height:8px;background:#0a0a0a;border-top:1px solid #ddd;border-right:1px solid #ddd"></div>
<div class="t" style="left:780px;top:420.7px;font-size:8.7px;width:100.5px;text-align:right">format</div>
<div class="dd" style="left:886px;top:420.7px;width:50px;height:12.5px;"></div>
<div class="t" style="left:888.5px;top:420.95px;font-size:8.7px;">1280x720</div>
<div class="t" style="left:780px;top:436.5px;font-size:8.7px;width:100.5px;text-align:right">proxy</div>
<div class="f" style="left:886px;top:437.5px;width:357px;height:10.5px;"></div>
<div class="a" style="left:1249px;top:438.5px;width:8.5px;height:8px;background:#0a0a0a;border-top:1px solid #ddd;border-right:1px solid #ddd"></div>
<div class="t" style="left:780px;top:452px;font-size:8.7px;width:100.5px;text-align:right">proxy format</div>
<div class="dd" style="left:886px;top:452px;width:120px;height:12.5px;"></div>
<div class="t" style="left:888.5px;top:452.25px;font-size:8.7px;">root.proxy_format 1024x778</div>
<div class="t" style="left:780px;top:467.7px;font-size:8.7px;width:100.5px;text-align:right">frame range</div>
<div class="f" style="left:886px;top:468.2px;width:47px;height:11px;"></div>
<div class="t" style="left:888.2px;top:467.7px;font-size:8.7px;">1</div>
<div class="dd" style="left:938px;top:467.7px;width:44.5px;height:12.5px;"></div>
<div class="t" style="left:940.5px;top:467.95px;font-size:8.7px;">hold</div>
<div class="f" style="left:986.3px;top:468.2px;width:47.7px;height:11px;"></div>
<div class="t" style="left:988.5px;top:467.7px;font-size:8.7px;">1</div>
<div class="dd" style="left:1037.8px;top:467.7px;width:46.5px;height:12.5px;"></div>
<div class="t" style="left:1040.3px;top:467.95px;font-size:8.7px;">hold</div>
<div class="t" style="left:780px;top:483px;font-size:8.7px;width:100.5px;text-align:right">frame</div>
<div class="dd" style="left:886px;top:483px;width:58.5px;height:12.5px;"></div>
<div class="t" style="left:888.5px;top:483.25px;font-size:8.7px;">expression</div>
<div class="f" style="left:948.5px;top:483.5px;width:310px;height:11px;"></div>
<div class="t" style="left:780px;top:498.3px;font-size:8.7px;width:100.5px;text-align:right">missing frames</div>
<div class="dd" style="left:886px;top:498.3px;width:71.5px;height:12.5px;"></div>
<div class="t" style="left:888.5px;top:498.55px;font-size:8.7px;">error</div>
<div class="btn" style="left:961.5px;top:498.3px;width:47.5px;height:12.5px"></div>
<div class="t" style="left:961.5px;top:497.8px;font-size:8.7px;width:47.5px;text-align:center">reload</div>
<div class="t" style="left:780px;top:514px;font-size:8.7px;width:100.5px;text-align:right">colorspace</div>
<div class="dd" style="left:886px;top:514px;width:73.5px;height:12.5px;"></div>
<div class="t" style="left:888.5px;top:514.25px;font-size:8.7px;">default (linear)</div>
<div class="a" style="left:964px;top:516.5px;width:6.5px;height:6.5px;background:#636363;"></div>
<div class="t" style="left:974.5px;top:513.5px;font-size:8.7px;">premultiplied</div>
<div class="a" style="left:1029.5px;top:516.5px;width:6.5px;height:6.5px;background:#636363;"></div>
<div class="t" style="left:1040px;top:513.5px;font-size:8.7px;">raw data</div>
<div class="t" style="left:780px;top:528.3px;font-size:8.7px;width:100.5px;text-align:right">exr Options</div>
<div class="a" style="left:886px;top:534.3px;width:372px;height:1px;background:#262626;"></div>
<div class="a" style="left:815px;top:548.4px;width:451px;height:4.4px;background:#2a2a2a;background:linear-gradient(#313131,#242424)"></div>
<div class="a" style="left:815px;top:552.5px;width:451px;height:1.6px;background:#cccccc;"></div>
<div class="a" style="left:815px;top:554.1px;width:451px;height:0.9px;background:#222;"></div>
<div class="a" style="left:815px;top:555px;width:451px;height:13.8px;background:#454545;"></div>
<div class="a" style="left:819px;top:558px;border-left:3.5px solid transparent;border-right:3.5px solid transparent;border-top:5px solid #0a0a0a"></div>
<div class="a" style="left:833px;top:555px;width:13px;height:12px;background:#4e4e4e;border:1px solid #3a3a3a"></div>
<div class="a" style="left:848px;top:555px;width:13px;height:12px;background:#4e4e4e;border:1px solid #3a3a3a"></div>
<div class="a" style="left:851px;top:559px;width:7px;height:3px;background:#111;border-radius:1.5px"></div>
<div class="a" style="left:836px;top:557.5px;width:7px;height:7px;border:1px solid #222;border-radius:50%"></div>
<div class="a" style="left:870px;top:556px;width:267px;height:11px;background:#636363;"></div>
<div class="t" style="left:872px;top:555.5px;font-size:8.7px;color:#d8d8d8;text-shadow:0 0 0.4px #d8d8d8;">Read2</div>
<svg class="a" style="left:1140px;top:554px" width="126" height="14" viewBox="1140 0 126 14"><rect x="1146.2" y="2.8" width="7.6" height="7.6" fill="#e4e4e4" stroke="#1e1e1e" stroke-width="0.9"/><path d="M1147.6,9 L1152.4,4.2" stroke="#333" stroke-width="1.3"/><rect x="1161.7" y="2.8" width="7.6" height="7.6" fill="#e4e4e4" stroke="#1e1e1e" stroke-width="0.9"/><path d="M1163.1,9 L1167.9,4.2" stroke="#333" stroke-width="1.3"/><rect x="1173.5" y="1" width="14" height="12" fill="#4a4a4a" stroke="#3a3a3a" stroke-width="0.8"/><rect x="1189.5" y="1" width="14" height="12" fill="#4a4a4a" stroke="#3a3a3a" stroke-width="0.8"/><rect x="1204" y="1" width="14" height="12" fill="#4a4a4a" stroke="#3a3a3a" stroke-width="0.8"/><path d="M1176.6,8.4 q3.6,-4 8,0" fill="none" stroke="#606060" stroke-width="1.4"/><path d="M1192.6,8.4 q4.4,-4 8,0" fill="none" stroke="#606060" stroke-width="1.4"/><path d="M1208,5 h5 v4.4 h-4" fill="none" stroke="#606060" stroke-width="1.4"/><path d="M1244.2,9.8 L1249.2,4.6 M1246.4,4.2 h3.2 v3.2" fill="none" stroke="#141414" stroke-width="1.4"/><path d="M1257,4.4 l4.6,4.8 M1261.6,4.4 l-4.6,4.8" stroke="#141414" stroke-width="1.2"/></svg>
<div class="t" style="left:1230.5px;top:555.3px;font-size:8.6px;color:#111;text-shadow:0 0 0.4px #111;font-weight:bold">?</div>
<div class="a" style="left:815px;top:569.5px;width:451px;height:15px;background:#353535;"></div>
<div class="a" style="left:849px;top:583.9px;width:417px;height:1px;background:#2b2b2b;"></div>
<div class="t" style="left:815px;top:571.5px;font-size:8.7px;width:34px;text-align:center">Read</div>
<div class="a" style="left:849px;top:569.5px;width:56px;height:15px;background:#262626;border-right:1px solid #333"></div>
<div class="t" style="left:849px;top:571.5px;font-size:8.7px;width:56px;text-align:center">Sequence</div>
<div class="a" style="left:905px;top:569.5px;width:32px;height:15px;background:#262626;border-right:1px solid #333"></div>
<div class="t" style="left:905px;top:571.5px;font-size:8.7px;width:32px;text-align:center">Node</div>
<div class="t" style="left:780px;top:591px;font-size:8.7px;width:100.5px;text-align:right">file</div>
<div class="f" style="left:886px;top:592px;width:357px;height:10.5px;"></div>
<div class="t" style="left:888px;top:590.8px;font-size:8.8px;">C:/Grafik/Images/Renders_Raw/tmp/MultiColorID_Test.coverage.exr</div>
<div class="a" style="left:1249px;top:593px;width:8.5px;height:8px;background:#0a0a0a;border-top:1px solid #ddd;border-right:1px solid #ddd"></div>
<div class="t" style="left:780px;top:606.7px;font-size:8.7px;width:100.5px;text-align:right">format</div>
<div class="dd" style="left:886px;top:606.7px;width:50px;height:12.5px;"></div>
<div class="t" style="left:888.5px;top:606.95px;font-size:8.7px;">1280x720</div>
<div class="t" style="left:780px;top:622.5px;font-size:8.7px;width:100.5px;text-align:right">proxy</div>
<div class="f" style="left:886px;top:623.5px;width:357px;height:10.5px;"></div>
<div class="a" style="left:1249px;top:624.5px;width:8.5px;height:8px;background:#0a0a0a;border-top:1px solid #ddd;border-right:1px solid #ddd"></div>
<div class="t" style="left:780px;top:638px;font-size:8.7px;width:100.5px;text-align:right">proxy format</div>
<div class="dd" style="left:886px;top:638px;width:120px;height:12.5px;"></div>
<div class="t" style="left:888.5px;top:638.25px;font-size:8.7px;">root.proxy_format 1024x778</div>
<div class="t" style="left:780px;top:653.7px;font-size:8.7px;width:100.5px;text-align:right">frame range</div>
<div class="f" style="left:886px;top:654.2px;width:47px;height:11px;"></div>
<div class="t" style="left:888.2px;top:653.7px;font-size:8.7px;">1</div>
<div class="dd" style="left:938px;top:653.7px;width:44.5px;height:12.5px;"></div>
<div class="t" style="left:940.5px;top:653.95px;font-size:8.7px;">hold</div>
<div class="f" style="left:986.3px;top:654.2px;width:47.7px;height:11px;"></div>
<div class="t" style="left:988.5px;top:653.7px;font-size:8.7px;">1</div>
<div class="dd" style="left:1037.8px;top:653.7px;width:46.5px;height:12.5px;"></div>
<div class="t" style="left:1040.3px;top:653.95px;font-size:8.7px;">hold</div>
<div class="t" style="left:780px;top:669px;font-size:8.7px;width:100.5px;text-align:right">frame</div>
<div class="dd" style="left:886px;top:669px;width:58.5px;height:12.5px;"></div>
<div class="t" style="left:888.5px;top:669.25px;font-size:8.7px;">expression</div>
<div class="f" style="left:948.5px;top:669.5px;width:310px;height:11px;"></div>
<div class="t" style="left:780px;top:684.3px;font-size:8.7px;width:100.5px;text-align:right">missing frames</div>
<div class="dd" style="left:886px;top:684.3px;width:71.5px;height:12.5px;"></div>
<div class="t" style="left:888.5px;top:684.55px;font-size:8.7px;">error</div>
<div class="btn" style="left:961.5px;top:684.3px;width:47.5px;height:12.5px"></div>
<div class="t" style="left:961.5px;top:683.8px;font-size:8.7px;width:47.5px;text-align:center">reload</div>
<div class="t" style="left:780px;top:700px;font-size:8.7px;width:100.5px;text-align:right">colorspace</div>
<div class="dd" style="left:886px;top:700px;width:73.5px;height:12.5px;"></div>
<div class="t" style="left:888.5px;top:700.25px;font-size:8.7px;">default (linear)</div>
<div class="a" style="left:964px;top:702.5px;width:6.5px;height:6.5px;background:#636363;"></div>
<div class="t" style="left:974.5px;top:699.5px;font-size:8.7px;">premultiplied</div>
<div class="a" style="left:1029.5px;top:702.5px;width:6.5px;height:6.5px;background:#636363;"></div>
<div class="t" style="left:1040px;top:699.5px;font-size:8.7px;">raw data</div>
<div class="t" style="left:780px;top:714.3px;font-size:8.7px;width:100.5px;text-align:right">exr Options</div>
<div class="a" style="left:886px;top:720.3px;width:372px;height:1px;background:#262626;"></div>
</body></html>
